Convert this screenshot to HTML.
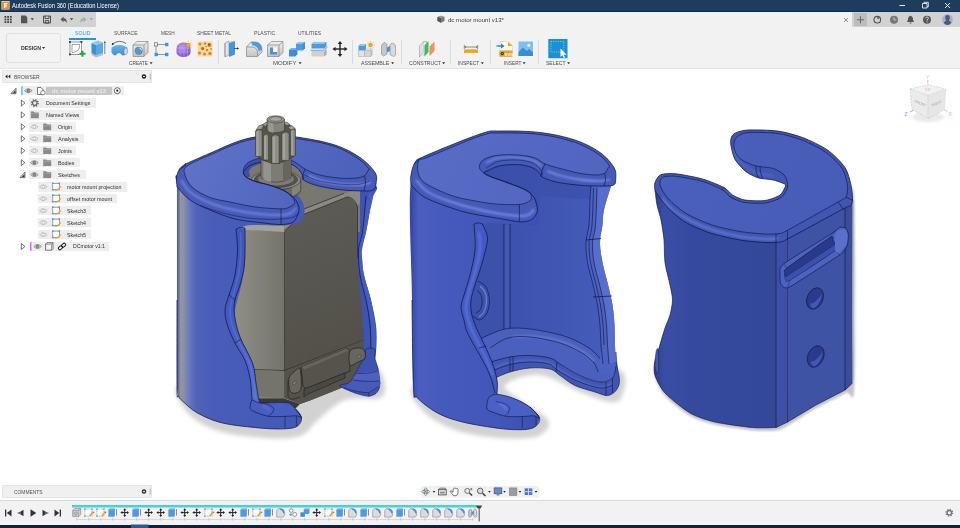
<!DOCTYPE html>
<html><head><meta charset="utf-8"><title>Autodesk Fusion 360 (Education License)</title>
<style>
html,body{margin:0;padding:0;}
body{width:960px;height:528px;overflow:hidden;position:relative;background:#fff;font-family:"Liberation Sans",sans-serif;color:#444;}
.a{position:absolute;}
.t{position:absolute;white-space:nowrap;line-height:1;}
#title{left:0;top:0;width:960px;height:11px;background:#1e3c5c;border-bottom:1px solid #152c47;}
#qat{left:0;top:12px;width:960px;height:16px;background:#f2f2f2;}
#qatl{left:0;top:12px;width:96px;height:15px;background:#d2d2d2;}
#qatr{left:852px;top:12px;width:108px;height:15px;background:#d2d2d2;}
#plus{left:854px;top:13px;width:13px;height:13px;background:#bdbdbd;}
#ribbon{left:0;top:28px;width:960px;height:40px;background:#f2f2f2;border-bottom:1px solid #e2e2e2;}
#design{left:6px;top:33px;width:53px;height:28px;border:1px solid #e0e0e0;border-radius:3px;background:#f3f3f3;}
.tab{font-size:5.6px;top:30.5px;color:#555;}
.grp{font-size:5.4px;top:60.5px;color:#555;}
.sep{position:absolute;top:40px;width:1px;height:24px;background:#dcdcdc;}
#bhead{left:2px;top:70px;width:150px;height:13px;background:#f0f0f0;border:1px solid #e4e4e4;box-sizing:border-box;}
.row{position:absolute;height:10px;background:#eeeeee;}
.rt{position:absolute;font-size:5.4px;color:#333;white-space:nowrap;line-height:1;}
#chead{left:2px;top:485px;width:150px;height:13px;background:#f0f0f0;border:1px solid #e4e4e4;box-sizing:border-box;}
#tl{left:0;top:500px;width:960px;height:24px;background:#f2f2f2;border-top:1px solid #d9d9d9;}
#task{left:0;top:524.5px;width:960px;height:3.5px;background:#0f2139;}
</style></head><body>
<div class="a" id="title"></div>
<div class="a" id="qat"></div><div class="a" id="qatl"></div><div class="a" id="qatr"></div><div class="a" id="plus"></div>
<div class="a" id="ribbon"></div>
<div class="a" id="design"></div>
<div class="a" style="left:69px;top:38px;width:27px;height:2px;background:#1a9be0;"></div>
<div class="sep" style="left:218px;"></div><div class="sep" style="left:352px;"></div><div class="sep" style="left:401px;"></div><div class="sep" style="left:450px;"></div><div class="sep" style="left:490px;"></div><div class="sep" style="left:538px;"></div>
<svg class="a" style="left:0;top:0" width="960" height="70" viewBox="0 0 960 70">
<defs>
<linearGradient id="ib" x1="0" x2="0" y1="0" y2="1"><stop offset="0" stop-color="#6ab4ea"/><stop offset="1" stop-color="#3d8fd6"/></linearGradient>
<linearGradient id="ig" x1="0" x2="0" y1="0" y2="1"><stop offset="0" stop-color="#f0f0f0"/><stop offset="1" stop-color="#c4c4c4"/></linearGradient>
<radialGradient id="ip" cx="0.4" cy="0.35" r="0.7"><stop offset="0" stop-color="#b79af0"/><stop offset="1" stop-color="#7a4fd0"/></radialGradient>
</defs>
<!-- title icon -->
<rect x="1.500" y="1" width="8" height="8.500" fill="#fff"/><rect x="2" y="1.500" width="7" height="7.500" fill="#f08a24"/><path d="M4 3H7.500V4.300H5.300V5.200H7V6.400H5.300V8H4Z" fill="#fff"/>
<!-- window controls -->
<path d="M899.500 5.500H905" stroke="#fff" stroke-width="0.9"/>
<path d="M922.500 3.500H927V8H922.500Z M924 3.500V2.300H928.300V6.800H927" fill="none" stroke="#fff" stroke-width="0.8"/>
<path d="M945 3L950 8M950 3L945 8" stroke="#fff" stroke-width="0.9"/>
<!-- quick access -->
<g fill="#444">
<rect x="4.500" y="16" width="1.800" height="1.800"/><rect x="7.200" y="16" width="1.800" height="1.800"/><rect x="9.900" y="16" width="1.800" height="1.800"/>
<rect x="4.500" y="18.600" width="1.800" height="1.800"/><rect x="7.200" y="18.600" width="1.800" height="1.800"/><rect x="9.900" y="18.600" width="1.800" height="1.800"/>
<rect x="4.500" y="21.200" width="1.800" height="1.800"/><rect x="7.200" y="21.200" width="1.800" height="1.800"/><rect x="9.900" y="21.200" width="1.800" height="1.800"/>
<path d="M21 15.500H25.500L27.300 17.300V23.300H21Z" fill="#555"/>
<path d="M30.500 18.300H34L32.250 20.300Z"/>
<path d="M43.500 16H50.500V23H43.500Z M45 16V18.500H49V16 M45.300 20.500H48.700V23H45.300Z" fill="none" stroke="#444" stroke-width="0.9"/>
<path d="M60.500 19.500L63.500 16.500V18.300Q67.500 18.300 66.500 23Q65.500 20.300 63.500 20.500V22.300Z" fill="#555"/>
<path d="M69.800 18.300H73.300L71.550 20.300Z"/>
<path d="M86.500 19.500L83.500 16.500V18.300Q79.500 18.300 80.500 23Q81.500 20.300 83.500 20.500V22.300Z" fill="#aaa"/>
<path d="M89.500 18.300H93L91.250 20.300Z" fill="#999"/>
</g>
<!-- doc tab icon -->
<path d="M437.500 17L441 15.800L444.500 17V21L441 22.700L437.500 21Z" fill="#777"/><path d="M437.500 17L441 18.300L444.500 17L441 15.800Z" fill="#999"/><path d="M441 18.300V22.700L437.500 21V17Z" fill="#555"/>
<!-- tab close x -->
<path d="M844 18L848 22M848 18L844 22" stroke="#666" stroke-width="0.7"/>
<!-- plus -->
<path d="M857 19.800H864M860.500 16.300V23.300" stroke="#666" stroke-width="1"/>
<!-- right icons -->
<circle cx="877.300" cy="19.700" r="3.300" fill="none" stroke="#555" stroke-width="1.100"/><path d="M877 17L880 17.500L878 19.500Z" fill="#555"/>
<circle cx="894" cy="19.700" r="4" fill="#777"/><path d="M894 17.300V19.900H896.300" stroke="#d2d2d2" stroke-width="0.9" fill="none"/>
<path d="M910.500 15.700Q913 16.200 913 19.500L914 22H907L908 19.500Q908 16.200 910.500 15.700ZM909.600 22.500H911.400V23.500H909.600Z" fill="#555"/>
<circle cx="927" cy="19.700" r="4" fill="#555"/><path d="M925.600 18.500Q925.800 17 927.100 17Q928.500 17.100 928.400 18.400Q928.300 19.300 927.100 19.800V20.800" stroke="#d8d8d8" stroke-width="0.9" fill="none"/><rect x="926.600" y="21.500" width="1" height="1" fill="#d8d8d8"/>
<circle cx="947.500" cy="19.500" r="5.600" fill="#9fb4d2"/><circle cx="947.500" cy="19.500" r="5.600" fill="none" stroke="#c4d0e2" stroke-width="0.6"/>
<path d="M947.500 15Q950 15 949.800 18Q949.600 20 948.800 20.600L951.500 22.500Q950 25 947.500 25.100Q945 25 943.500 22.500L946.200 20.600Q945.400 20 945.200 18Q945 15 947.500 15Z" fill="#4a5a78"/>
<!-- DESIGN arrow -->
<path d="M42 47H45.200L43.600 49Z" fill="#333"/>
<!-- group arrows -->
<g fill="#333">
<path d="M149.6 62.300H152.6L151.1 64.200Z"/><path d="M298.6 62.300H301.6L300.1 64.200Z"/><path d="M391.1 62.300H394.1L392.6 64.200Z"/>
<path d="M442.1 62.300H445.1L443.6 64.200Z"/><path d="M480.8 62.300H483.8L482.3 64.200Z"/><path d="M522.6 62.300H525.6L524.1 64.200Z"/><path d="M567.1 62.300H570.1L568.6 64.200Z"/>
</g>
<!-- 1 create sketch -->
<g>
<rect x="70" y="42" width="11.500" height="12.500" fill="#fff" stroke="#555" stroke-width="0.600"/>
<path d="M72 44.500H79.500V47Q79 51 73.500 52.500H72Z" fill="none" stroke="#666" stroke-width="0.600"/>
<g fill="#333"><rect x="69" y="41" width="1.800" height="1.800"/><rect x="80.500" y="41" width="1.800" height="1.800"/><rect x="69" y="53.500" width="1.800" height="1.800"/></g>
<path d="M79.500 53.800H85.500M82.500 50.800V56.800" stroke="#1fa83c" stroke-width="1.900"/>
</g>
<!-- 2 extrude -->
<g>
<path d="M91.500 53L96 55.500L103 53V55L96 57.500L91.500 55Z" fill="#bdbdbd"/>
<path d="M91.500 43L96 45V55.500L91.500 53Z" fill="#3f8fd8"/><path d="M96 45L103 42.500V53L96 55.500Z" fill="#5aa7e6"/><path d="M91.500 43L98 40.500L103 42.500L96 45Z" fill="#8cc6f2"/>
<path d="M104.800 42V54" stroke="#333" stroke-width="0.600"/><path d="M103.800 42.800L104.800 41L105.800 42.800Z" fill="#333"/>
</g>
<!-- 3 revolve -->
<g>
<path d="M111.500 47.500Q119 42 127.500 47.500V52.500Q125 56 122.500 55.500Q119 50.500 115.500 55.500Q113 55.500 111.500 52.500Z" fill="url(#ib)"/>
<ellipse cx="125.800" cy="51.500" rx="1.700" ry="3.300" fill="#d8d8d8" stroke="#888" stroke-width="0.400"/>
<path d="M112.500 44Q119.500 39 126 43.500" fill="none" stroke="#333" stroke-width="0.700"/><path d="M111.800 45.500L112 42.800L114.300 44Z" fill="#333"/>
</g>
<!-- 4 hole -->
<g>
<path d="M133 45L137 41.500H148V52.500L144 56.500H133Z" fill="url(#ig)" stroke="#777" stroke-width="0.600"/>
<path d="M133 45H144V56.500M144 45L148 41.500" fill="none" stroke="#777" stroke-width="0.600"/>
<circle cx="138.700" cy="50.800" r="3.700" fill="#4a9be0" stroke="#666" stroke-width="0.500"/><path d="M138.500 47.500A3.500 3.500 0 0 1 142 51Q140 48.500 138.500 47.500Z" fill="#e8f2fc"/>
</g>
<!-- 5 pattern -->
<g>
<path d="M156 44.500H166M156 44.500V54.500M156 54.500H166" stroke="#555" stroke-width="0.600" fill="none"/>
<rect x="154.500" y="42.800" width="3.200" height="3.200" fill="#fff" stroke="#555" stroke-width="0.600"/>
<rect x="165" y="42.800" width="3.400" height="3.400" fill="#3f95de"/><rect x="154.500" y="52.800" width="3.400" height="3.400" fill="#3f95de"/><rect x="165" y="52.800" width="3.400" height="3.400" fill="#3f95de"/>
</g>
<!-- 6 form -->
<g>
<path d="M176.500 49Q176.500 43 183.500 42.500Q190.500 43 190.500 49V53Q189 57 183.500 57Q178 57 176.500 53Z" fill="url(#ip)"/>
<path d="M180 43.500V56.500M184 42.800V57M187.500 43.500V56M176.500 48H190.500M176.500 52H190.500" stroke="#c9b4f6" stroke-width="0.400" fill="none"/>
<circle cx="188.500" cy="45" r="2.300" fill="#f7a21b"/><path d="M188.500 41V42M188.500 48V49M184.500 45H185.500M191.500 45H192.500M185.700 42.200L186.400 42.900M190.600 47.100L191.300 47.800M191.300 42.200L190.600 42.900M185.700 47.800L186.400 47.100" stroke="#f7a21b" stroke-width="0.700"/>
</g>
<!-- 7 texture -->
<g>
<rect x="197.500" y="41.500" width="15" height="15" fill="#f3d9a6"/>
<g fill="#d98a1e"><circle cx="200" cy="44" r="1.500"/><circle cx="205" cy="43.500" r="1.200"/><circle cx="209.500" cy="45" r="2"/><circle cx="202.500" cy="48.500" r="1.800"/><circle cx="207" cy="50" r="1.300"/><circle cx="199.500" cy="53" r="1.600"/><circle cx="204.500" cy="54" r="1.500"/><circle cx="210" cy="53.500" r="1.700"/><circle cx="211" cy="49" r="0.900"/></g>
<g fill="#7a4a12"><circle cx="209" cy="44.500" r="1"/><circle cx="203" cy="49" r="0.800"/><circle cx="206" cy="46.500" r="0.600"/></g>
</g>
<!-- 8 press pull -->
<g>
<path d="M225 43L229 41V55L225 57Z" fill="#e4e4e4" stroke="#777" stroke-width="0.500"/><path d="M225 43Q224.500 50 225 57" fill="none" stroke="#777" stroke-width="0.500"/>
<path d="M229 43L235 41V54.500L229 57Z" fill="#3f95de"/><path d="M229 43L231 41.300H235" fill="#8cc6f2"/>
<path d="M234 48.500H238" stroke="#222" stroke-width="0.700"/><path d="M237 47.300L239 48.500L237 49.700Z" fill="#222"/>
</g>
<!-- 9 fillet -->
<g>
<path d="M246.500 47L251 42H256Q262 43 262 50V52L257.500 56.500H246.500Z" fill="url(#ig)" stroke="#777" stroke-width="0.600"/>
<path d="M251 42H256Q262 43 262 50L258.500 51Q258 46 252.500 45.500Z" fill="#4a9be0"/>
<path d="M246.500 47H252Q257.500 47.500 257.500 53V56.500" fill="none" stroke="#777" stroke-width="0.600"/>
</g>
<!-- 10 shell -->
<g>
<path d="M267.500 45L271.500 41.500H283V52.500L279 56.500H267.500Z" fill="url(#ig)" stroke="#777" stroke-width="0.600"/>
<path d="M267.500 45H279V56.500M279 45L283 41.500" fill="none" stroke="#777" stroke-width="0.600"/>
<path d="M270 47.500H273V52H277V54.500H270Z" fill="#3f95de"/><path d="M273 47.500H277V52H273Z" fill="#fafafa"/>
</g>
<!-- 11 combine -->
<g>
<path d="M289 50L291.500 48H297.500V54.500L295 56.500H289Z" fill="#3f8fd8"/><path d="M289 50H295V56.500" fill="none" stroke="#2f7cc4" stroke-width="0.400"/><path d="M289 50L291.500 48H297.500L295 50Z" fill="#6ab4ea"/>
<path d="M296 44L298.500 42H305V48.500L302.500 50.500H296Z" fill="#4a9be0"/><path d="M296 44L298.500 42H305L302.500 44Z" fill="#8cc6f2"/><path d="M302.500 44V50.500L305 48.500V42Z" fill="#3f8fd8"/>
</g>
<!-- 12 split -->
<g>
<path d="M311.500 44L314 42H326.500V46.500L324 48.500H311.500Z" fill="#4a9be0"/><path d="M311.500 44L314 42H326.500L324 44Z" fill="#8cc6f2"/>
<path d="M311.500 51H324L326.500 49V54.500L324 56.500H311.500Z" fill="#d0d0d0"/><path d="M324 51V56.500L326.500 54.500V49Z" fill="#b0b0b0"/>
<path d="M310.500 50.300L323 50.300L327.500 47" fill="none" stroke="#3f95de" stroke-width="0.800"/>
</g>
<!-- 13 move -->
<g fill="#222"><path d="M339.300 43.500H340.700V54.500H339.300Z"/><path d="M334.500 48.300H345.500V49.700H334.500Z"/>
<path d="M340 41L342.300 44H337.700Z"/><path d="M340 57L342.300 54H337.700Z"/><path d="M332.500 49L335.500 46.700V51.300Z"/><path d="M347.500 49L344.500 46.700V51.300Z"/></g>
<!-- 14 new component -->
<g>
<path d="M358.500 46L360.500 44H366V50.500H358.500Z" fill="#4a9be0"/><path d="M358.500 46L360.500 44H366L364.500 46Z" fill="#8cc6f2"/>
<path d="M358.500 50.500H364.500V56.500H358.500Z" fill="#e2e2e2" stroke="#999" stroke-width="0.400"/><path d="M364.500 50.500H371V56.500H364.500Z" fill="#d4d4d4" stroke="#999" stroke-width="0.400"/><path d="M364.500 50.500L366 49H372.500L371 50.500Z" fill="#f0f0f0" stroke="#999" stroke-width="0.400"/><path d="M371 50.500L372.500 49V55L371 56.500Z" fill="#bbb"/>
<circle cx="370.500" cy="45" r="2.300" fill="#f7a21b"/><path d="M370.500 41V42M370.500 48V49M366.500 45H367.500M373.500 45H374.500M367.700 42.200L368.400 42.900M372.600 47.100L373.300 47.800M373.300 42.200L372.600 42.900M367.700 47.800L368.400 47.100" stroke="#f7a21b" stroke-width="0.700"/>
</g>
<!-- 15 joint -->
<g>
<path d="M381.500 46Q382 43 385 42.500L387 44.500V54L383.500 56L381.500 54.500Z" fill="#c8c8c8" stroke="#777" stroke-width="0.500"/>
<path d="M395.500 46Q395 43.500 392 43L390 45V54.500L393.500 56.500L395.500 55Z" fill="#d8d8d8" stroke="#777" stroke-width="0.500"/>
<path d="M387 47.500L390 46V51L387 52.500Z" fill="#3f95de"/>
</g>
<!-- 16 construct -->
<g>
<path d="M419.500 46L423.500 41.500V52.500L419.500 57Z" fill="#e0e0e0" stroke="#888" stroke-width="0.500"/><path d="M423.500 41.500H426.500V52L423.500 55.500" fill="#ececec" stroke="#888" stroke-width="0.500"/>
<path d="M424.500 45.500L428.500 41V52L424.500 56.500Z" fill="#41b76a"/>
<path d="M429.500 46.500L434.500 41.500V51L429.500 56Z" fill="#ee9257"/>
</g>
<!-- 17 inspect -->
<g>
<rect x="464" y="49.500" width="14" height="3.500" fill="#f5a81c"/>
<path d="M464.300 45V49M477.700 45V49M465 47H477" stroke="#444" stroke-width="0.600" fill="none"/><path d="M464.500 47L466 46.200V47.800ZM477.500 47L476 46.200V47.800Z" fill="#444"/>
<path d="M466 49.500V50.800M468 49.500V50.800M470 49.500V50.800M472 49.500V50.800M474 49.500V50.800M476 49.500V50.800" stroke="#b8780c" stroke-width="0.400"/>
</g>
<!-- 18 insert svg -->
<g>
<path d="M500 41.500H508L512.500 46V56.500H500Z" fill="#fbfbfb" stroke="#bbb" stroke-width="0.400"/><path d="M508 41.500L512.500 46H508Z" fill="#f5a81c"/>
<rect x="499.500" y="50.500" width="13" height="6.200" fill="#e8a020"/><circle cx="502.300" cy="53.600" r="1.700" fill="#333"/><circle cx="502.300" cy="53.600" r="0.700" fill="#e8a020"/>
<text x="504.600" y="55.500" font-family="Liberation Sans,sans-serif" font-size="4.200" font-weight="bold" fill="#fff">SVG</text>
<path d="M496.500 46H502" stroke="#1f7fd6" stroke-width="1.300"/><path d="M501 43.500L504.500 46L501 48.500Z" fill="#1f7fd6"/>
</g>
<!-- 19 insert image -->
<g>
<rect x="518.500" y="41.500" width="14.500" height="14.500" fill="#7cc0f2"/><path d="M518.500 52L523 47.500L526.500 51L529 49L533 52.500V56H518.500Z" fill="#3d8bd0"/><circle cx="528.800" cy="45.300" r="1.500" fill="#fdf3b0"/>
</g>
<!-- 20 select -->
<g>
<rect x="548.300" y="39" width="19.200" height="19.200" fill="#1b8fd8"/>
<rect x="550.800" y="41.500" width="13" height="10.500" fill="none" stroke="#9be86a" stroke-width="0.700" stroke-dasharray="1.300 1"/>
<path d="M560.500 48.500V57L562.500 55.200L563.800 58L565 57.500L563.800 54.800H566.500Z" fill="#fff"/>
</g>
</svg>

<div class="a" id="bhead"></div>
<div class="a" id="chead"></div>
<div class="row" style="left:20.5px;top:85.8px;width:103.5px;height:9.6px;"></div>
<div class="a" style="left:46px;top:86.500px;width:66px;height:8.200px;background:#c6c6c6;"></div>
<div class="t" style="left:51.5px;top:88.5px;font-size:5.7px;color:#ececec;font-weight:bold;transform:scaleX(0.991);transform-origin:0 0;">dc motor mount v13</div>
<div class="row" style="left:29.0px;top:98.2px;width:66.5px;height:9.600px;"></div>
<div class="t" style="left:45.7px;top:100.9px;font-size:5.5px;color:#2e2e2e;transform:scaleX(0.953);transform-origin:0 0;">Document Settings</div>
<div class="row" style="left:29.0px;top:110.1px;width:54.5px;height:9.600px;"></div>
<div class="t" style="left:45.7px;top:112.8px;font-size:5.5px;color:#2e2e2e;transform:scaleX(0.984);transform-origin:0 0;">Named Views</div>
<div class="row" style="left:29.0px;top:122.0px;width:47.0px;height:9.600px;"></div>
<div class="t" style="left:58.0px;top:124.7px;font-size:5.5px;color:#2e2e2e;transform:scaleX(0.954);transform-origin:0 0;">Origin</div>
<div class="row" style="left:29.0px;top:133.9px;width:55.0px;height:9.600px;"></div>
<div class="t" style="left:58.0px;top:136.6px;font-size:5.5px;color:#2e2e2e;transform:scaleX(1.001);transform-origin:0 0;">Analysis</div>
<div class="row" style="left:29.0px;top:145.9px;width:47.0px;height:9.600px;"></div>
<div class="t" style="left:58.0px;top:148.6px;font-size:5.5px;color:#2e2e2e;transform:scaleX(0.974);transform-origin:0 0;">Joints</div>
<div class="row" style="left:29.0px;top:157.9px;width:51.0px;height:9.600px;"></div>
<div class="t" style="left:58.0px;top:160.6px;font-size:5.5px;color:#2e2e2e;transform:scaleX(0.981);transform-origin:0 0;">Bodies</div>
<div class="row" style="left:29.0px;top:169.8px;width:57.0px;height:9.600px;"></div>
<div class="t" style="left:58.0px;top:172.5px;font-size:5.5px;color:#2e2e2e;transform:scaleX(0.972);transform-origin:0 0;">Sketches</div>
<div class="row" style="left:38px;top:182.0px;width:88.6px;height:9.600px;"></div>
<div class="t" style="left:67.0px;top:184.7px;font-size:5.5px;color:#2e2e2e;transform:scaleX(0.969);transform-origin:0 0;">motor mount projection</div>
<div class="row" style="left:38px;top:193.9px;width:79.0px;height:9.600px;"></div>
<div class="t" style="left:67.0px;top:196.6px;font-size:5.5px;color:#2e2e2e;transform:scaleX(0.984);transform-origin:0 0;">offset motor mount</div>
<div class="row" style="left:38px;top:205.9px;width:53.0px;height:9.600px;"></div>
<div class="t" style="left:67.0px;top:208.6px;font-size:5.5px;color:#2e2e2e;transform:scaleX(0.956);transform-origin:0 0;">Sketch3</div>
<div class="row" style="left:38px;top:217.8px;width:53.0px;height:9.600px;"></div>
<div class="t" style="left:67.0px;top:220.5px;font-size:5.5px;color:#2e2e2e;transform:scaleX(0.956);transform-origin:0 0;">Sketch4</div>
<div class="row" style="left:38px;top:229.8px;width:53.0px;height:9.600px;"></div>
<div class="t" style="left:67.0px;top:232.5px;font-size:5.5px;color:#2e2e2e;transform:scaleX(0.956);transform-origin:0 0;">Sketch5</div>
<div class="row" style="left:29.500px;top:241.7px;width:79px;height:9.600px;"></div>
<div class="t" style="left:73.0px;top:244.4px;font-size:5.5px;color:#2e2e2e;transform:scaleX(0.943);transform-origin:0 0;">DCmotor v1:1</div>
<svg class="a" style="left:0;top:0" width="160" height="528" viewBox="0 0 160 528"><path d="M7.500 74.500L5.300 76.500L7.500 78.500ZM10.300 74.500L8.100 76.500L10.300 78.500Z" fill="#222"/>
<circle cx="144" cy="76.500" r="2.200" fill="#222"/><rect x="143" y="76" width="2" height="1" fill="#eee"/>
<path d="M150.300 73.500V79.500" stroke="#999" stroke-width="0.700"/>
<circle cx="144" cy="491.500" r="2.200" fill="#222"/><path d="M142.800 491.500h2.400M144 490.300v2.400" stroke="#eee" stroke-width="0.700"/>
<path d="M150.300 488.500V494.500" stroke="#999" stroke-width="0.700"/>
<path d="M16.0 93.7h-5l5 -5.500Z" fill="#fff" stroke="#333" stroke-width="0.700" stroke-linejoin="round"/><path d="M15.5 93.2h-2.800l2.800 -3.200Z" fill="#333"/>
<rect x="21.300" y="86.300" width="1.300" height="8.800" fill="#3cc8d8"/>
<g transform="translate(28.3 90.7)" opacity="1"><path d="M-3.800 0Q0 -3.800 3.800 0Q0 3.800 -3.800 0Z" fill="#f6f6f6" stroke="#6a6a6a" stroke-width="0.700"/><circle r="1.600" fill="#8a8a8a" stroke="#6a6a6a" stroke-width="0.600"/></g>
<path d="M37.500 87.500h3.500l2 2v5h-5.500Z" fill="#fff" stroke="#444" stroke-width="0.700"/><path d="M40.800 91.500l2.200 -1l2 1v2.500l-2 1l-2.200 -1Z" fill="#fff" stroke="#444" stroke-width="0.600"/>
<circle cx="117.300" cy="90.700" r="3" fill="#fff" stroke="#333" stroke-width="0.700"/><circle cx="117.300" cy="90.700" r="1.100" fill="#222"/>
<path d="M21.3 100.0v6l3.600 -3Z" fill="#fff" stroke="#333" stroke-width="0.700" stroke-linejoin="round"/>
<g transform="translate(34.800 103.0)"><circle r="2.300" fill="none" stroke="#666" stroke-width="1.300"/><circle r="3.300" fill="none" stroke="#666" stroke-width="1.400" stroke-dasharray="1.300 1.290"/></g>
<path d="M21.3 111.9v6l3.600 -3Z" fill="#fff" stroke="#333" stroke-width="0.700" stroke-linejoin="round"/>
<path d="M30.8 111.6h3l0.800 0.900h4.200v5.800h-8Z" fill="#8a8a8a"/><path d="M30.8 113.7h8" stroke="#b5b5b5" stroke-width="0.500"/>
<path d="M21.3 123.8v6l3.600 -3Z" fill="#fff" stroke="#333" stroke-width="0.700" stroke-linejoin="round"/>
<g transform="translate(34.3 126.8)" opacity="0.45"><path d="M-3.800 0Q0 -3.800 3.800 0Q0 3.800 -3.800 0Z" fill="#f6f6f6" stroke="#6a6a6a" stroke-width="0.700"/><circle r="1.600" fill="none" stroke="#6a6a6a" stroke-width="0.600"/></g>
<path d="M43.2 123.5h3l0.800 0.900h4.200v5.800h-8Z" fill="#8a8a8a"/><path d="M43.2 125.6h8" stroke="#b5b5b5" stroke-width="0.500"/>
<path d="M21.3 135.7v6l3.600 -3Z" fill="#fff" stroke="#333" stroke-width="0.700" stroke-linejoin="round"/>
<g transform="translate(34.3 138.7)" opacity="0.45"><path d="M-3.800 0Q0 -3.800 3.800 0Q0 3.800 -3.800 0Z" fill="#f6f6f6" stroke="#6a6a6a" stroke-width="0.700"/><circle r="1.600" fill="none" stroke="#6a6a6a" stroke-width="0.600"/></g>
<path d="M43.2 135.4h3l0.800 0.900h4.200v5.800h-8Z" fill="#8a8a8a"/><path d="M43.2 137.5h8" stroke="#b5b5b5" stroke-width="0.500"/>
<path d="M21.3 147.7v6l3.600 -3Z" fill="#fff" stroke="#333" stroke-width="0.700" stroke-linejoin="round"/>
<g transform="translate(34.3 150.7)" opacity="0.45"><path d="M-3.800 0Q0 -3.800 3.800 0Q0 3.800 -3.800 0Z" fill="#f6f6f6" stroke="#6a6a6a" stroke-width="0.700"/><circle r="1.600" fill="none" stroke="#6a6a6a" stroke-width="0.600"/></g>
<path d="M43.2 147.4h3l0.800 0.900h4.200v5.800h-8Z" fill="#8a8a8a"/><path d="M43.2 149.5h8" stroke="#b5b5b5" stroke-width="0.500"/>
<path d="M21.3 159.7v6l3.600 -3Z" fill="#fff" stroke="#333" stroke-width="0.700" stroke-linejoin="round"/>
<g transform="translate(34.3 162.7)" opacity="1"><path d="M-3.800 0Q0 -3.800 3.800 0Q0 3.800 -3.800 0Z" fill="#f6f6f6" stroke="#6a6a6a" stroke-width="0.700"/><circle r="1.600" fill="#8a8a8a" stroke="#6a6a6a" stroke-width="0.600"/></g>
<path d="M43.2 159.4h3l0.800 0.900h4.200v5.800h-8Z" fill="#8a8a8a"/><path d="M43.2 161.5h8" stroke="#b5b5b5" stroke-width="0.500"/>
<path d="M25.0 177.6h-5l5 -5.500Z" fill="#fff" stroke="#333" stroke-width="0.700" stroke-linejoin="round"/><path d="M24.5 177.1h-2.800l2.800 -3.200Z" fill="#333"/>
<g transform="translate(34.3 174.6)" opacity="1"><path d="M-3.800 0Q0 -3.800 3.800 0Q0 3.800 -3.800 0Z" fill="#f6f6f6" stroke="#6a6a6a" stroke-width="0.700"/><circle r="1.600" fill="#8a8a8a" stroke="#6a6a6a" stroke-width="0.600"/></g>
<path d="M43.2 171.3h3l0.800 0.900h4.200v5.800h-8Z" fill="#8a8a8a"/><path d="M43.2 173.4h8" stroke="#b5b5b5" stroke-width="0.500"/>
<g transform="translate(43.3 186.8)" opacity="0.45"><path d="M-3.800 0Q0 -3.800 3.800 0Q0 3.800 -3.800 0Z" fill="#f6f6f6" stroke="#6a6a6a" stroke-width="0.700"/><circle r="1.600" fill="none" stroke="#6a6a6a" stroke-width="0.600"/></g>
<rect x="52.8" y="183.3" width="6.500" height="6.500" fill="#fff" stroke="#666" stroke-width="0.600"/><g fill="#3f95de"><rect x="52.0" y="182.5" width="1.500" height="1.500"/><rect x="58.5" y="182.5" width="1.500" height="1.500"/><rect x="52.0" y="189.1" width="1.500" height="1.500"/></g><path d="M56.8 189.6l3.500 -3.500l1 1l-3.500 3.500Z" fill="#f5a81c"/><path d="M56.8 190.6l-1.400 0.300l0.400 -1.300Z" fill="#d33"/>
<g transform="translate(43.3 198.7)" opacity="0.45"><path d="M-3.800 0Q0 -3.800 3.800 0Q0 3.800 -3.800 0Z" fill="#f6f6f6" stroke="#6a6a6a" stroke-width="0.700"/><circle r="1.600" fill="none" stroke="#6a6a6a" stroke-width="0.600"/></g>
<rect x="52.8" y="195.2" width="6.500" height="6.500" fill="#fff" stroke="#666" stroke-width="0.600"/><g fill="#3f95de"><rect x="52.0" y="194.4" width="1.500" height="1.500"/><rect x="58.5" y="194.4" width="1.500" height="1.500"/><rect x="52.0" y="201.0" width="1.500" height="1.500"/></g><path d="M56.8 201.5l3.500 -3.500l1 1l-3.500 3.500Z" fill="#f5a81c"/><path d="M56.8 202.5l-1.400 0.300l0.400 -1.300Z" fill="#d33"/>
<g transform="translate(43.3 210.7)" opacity="0.45"><path d="M-3.800 0Q0 -3.800 3.800 0Q0 3.800 -3.800 0Z" fill="#f6f6f6" stroke="#6a6a6a" stroke-width="0.700"/><circle r="1.600" fill="none" stroke="#6a6a6a" stroke-width="0.600"/></g>
<rect x="52.8" y="207.2" width="6.500" height="6.500" fill="#fff" stroke="#666" stroke-width="0.600"/><g fill="#3f95de"><rect x="52.0" y="206.4" width="1.500" height="1.500"/><rect x="58.5" y="206.4" width="1.500" height="1.500"/><rect x="52.0" y="213.0" width="1.500" height="1.500"/></g><path d="M56.8 213.5l3.500 -3.500l1 1l-3.500 3.500Z" fill="#f5a81c"/><path d="M56.8 214.5l-1.400 0.300l0.400 -1.300Z" fill="#d33"/>
<g transform="translate(43.3 222.6)" opacity="0.45"><path d="M-3.800 0Q0 -3.800 3.800 0Q0 3.800 -3.800 0Z" fill="#f6f6f6" stroke="#6a6a6a" stroke-width="0.700"/><circle r="1.600" fill="none" stroke="#6a6a6a" stroke-width="0.600"/></g>
<rect x="52.8" y="219.1" width="6.500" height="6.500" fill="#fff" stroke="#666" stroke-width="0.600"/><g fill="#3f95de"><rect x="52.0" y="218.3" width="1.500" height="1.500"/><rect x="58.5" y="218.3" width="1.500" height="1.500"/><rect x="52.0" y="224.9" width="1.500" height="1.500"/></g><path d="M56.8 225.4l3.500 -3.500l1 1l-3.500 3.500Z" fill="#f5a81c"/><path d="M56.8 226.4l-1.400 0.300l0.400 -1.300Z" fill="#d33"/>
<g transform="translate(43.3 234.6)" opacity="0.45"><path d="M-3.800 0Q0 -3.800 3.800 0Q0 3.800 -3.800 0Z" fill="#f6f6f6" stroke="#6a6a6a" stroke-width="0.700"/><circle r="1.600" fill="none" stroke="#6a6a6a" stroke-width="0.600"/></g>
<rect x="52.8" y="231.1" width="6.500" height="6.500" fill="#fff" stroke="#666" stroke-width="0.600"/><g fill="#3f95de"><rect x="52.0" y="230.3" width="1.500" height="1.500"/><rect x="58.5" y="230.3" width="1.500" height="1.500"/><rect x="52.0" y="236.9" width="1.500" height="1.500"/></g><path d="M56.8 237.4l3.500 -3.500l1 1l-3.500 3.500Z" fill="#f5a81c"/><path d="M56.8 238.4l-1.400 0.300l0.400 -1.300Z" fill="#d33"/>
<path d="M21.3 243.5v6l3.600 -3Z" fill="#fff" stroke="#333" stroke-width="0.700" stroke-linejoin="round"/>
<rect x="30" y="242.1" width="1.500" height="8.800" fill="#e070d8"/>
<g transform="translate(37.5 246.5)" opacity="1"><path d="M-3.800 0Q0 -3.800 3.800 0Q0 3.800 -3.800 0Z" fill="#f6f6f6" stroke="#6a6a6a" stroke-width="0.700"/><circle r="1.600" fill="#8a8a8a" stroke="#6a6a6a" stroke-width="0.600"/></g>
<path d="M45.500 244.2l1.500 -1.500h6v6l-1.500 1.500h-6Z" fill="#f4f4f4" stroke="#444" stroke-width="0.700" stroke-linejoin="round"/><path d="M45.500 244.2h6v6M51.500 244.2l1.500 -1.500" fill="none" stroke="#444" stroke-width="0.500"/>
<g transform="translate(62 246.5) rotate(-40)" fill="none" stroke="#222" stroke-width="1"><rect x="-4.300" y="-1.500" width="4.600" height="3" rx="1.500"/><rect x="-0.300" y="-1.500" width="4.600" height="3" rx="1.500"/></g></svg>
<div class="a" id="tl"></div>
<div class="a" id="task"></div>
<svg class="a" style="left:0;top:0" width="960" height="528" viewBox="0 0 960 528">
<g fill="#333">
<rect x="5" y="509.500" width="1.300" height="7"/><path d="M11.500 509.500V516.500L6.800 513Z"/>
<path d="M23.500 509.800V516.200L18.500 513Z"/><path d="M21 511.500L17 513L21 514.500Z" fill="#666"/>
<path d="M30.500 509.300V516.700L36.300 513Z"/>
<path d="M42.500 509.800V516.200L47.500 513Z"/><path d="M45 511.500L49 513L45 514.500Z" fill="#666"/>
<path d="M54.500 509.500V516.500L59.200 513Z"/><rect x="59.700" y="509.500" width="1.300" height="7"/>
</g>
<rect x="72" y="505" width="405.500" height="2.500" fill="#45d2dc"/>
<path d="M77 519.500H473" stroke="#cfcfcf" stroke-width="0.700"/>
<path d="M76.7 518v2.800M88.7 518v2.800M100.7 518v2.800M112.7 518v2.800M124.7 518v2.800M136.7 518v2.800M148.7 518v2.800M160.7 518v2.800M172.7 518v2.800M184.7 518v2.800M196.7 518v2.800M208.7 518v2.800M220.7 518v2.800M232.7 518v2.800M244.7 518v2.800M256.7 518v2.800M268.7 518v2.800M280.7 518v2.800M292.7 518v2.800M304.7 518v2.800M316.7 518v2.800M328.7 518v2.800M340.7 518v2.800M352.7 518v2.800M364.7 518v2.800M376.7 518v2.800M388.7 518v2.800M400.7 518v2.800M412.7 518v2.800M424.7 518v2.800M436.7 518v2.800M448.7 518v2.800M460.7 518v2.800M472.7 518v2.800" stroke="#bdbdbd" stroke-width="0.700"/>
<path d="M72.7 510.6l2 -2h6v6l-2 2h-6Z" fill="#d8d8d8" stroke="#777" stroke-width="0.600"/><path d="M72.7 510.6h6v6M78.7 510.6l2 -2" fill="none" stroke="#777" stroke-width="0.500"/><circle cx="75.7" cy="513.6" r="1.800" fill="#bbb" stroke="#777" stroke-width="0.400"/>
<rect x="84.9" y="509.1" width="7" height="7" fill="#fdfdfd" stroke="#777" stroke-width="0.500" stroke-dasharray="1.200 0.600"/><g fill="#3f95de"><rect x="84.2" y="508.4" width="1.300" height="1.300"/><rect x="91.3" y="508.4" width="1.300" height="1.300"/><rect x="84.2" y="515.5" width="1.300" height="1.300"/></g><path d="M89.0 515.4l3.300 -3.300l1.200 1.200l-3.300 3.300Z" fill="#f5a81c"/><path d="M92.3 512.1l1.200 1.200l0.800 -0.800l-1.200 -1.200Z" fill="#e0403a"/>
<rect x="96.9" y="509.1" width="7" height="7" fill="#fdfdfd" stroke="#777" stroke-width="0.500" stroke-dasharray="1.200 0.600"/><g fill="#3f95de"><rect x="96.2" y="508.4" width="1.300" height="1.300"/><rect x="103.3" y="508.4" width="1.300" height="1.300"/><rect x="96.2" y="515.5" width="1.300" height="1.300"/></g><path d="M101.0 515.4l3.300 -3.300l1.200 1.200l-3.300 3.300Z" fill="#f5a81c"/><path d="M104.3 512.1l1.200 1.200l0.800 -0.800l-1.200 -1.200Z" fill="#e0403a"/>
<path d="M108.4 515.6h6.500v1.500h-6.500Z" fill="#c4c4c4"/><path d="M108.4 509.6l1.500 -1.200h5v7l-1.500 1.200h-5Z" fill="#4a9be0"/><path d="M108.4 509.6l1.500 -1.200h5l-1.500 1.200Z" fill="#8cc6f2"/><path d="M116.5 509.1v6.500" stroke="#444" stroke-width="0.600"/>
<g fill="#222" transform="translate(124.7 512.6)"><rect x="-0.500" y="-3" width="1" height="6"/><rect x="-3" y="-0.500" width="6" height="1"/><path d="M0 -4.300L1.500 -2.300H-1.500ZM0 4.300L1.500 2.300H-1.500ZM-4.300 0L-2.300 -1.500V1.500ZM4.300 0L2.300 -1.500V1.500Z"/></g>
<path d="M132.4 515.6h6.500v1.500h-6.500Z" fill="#c4c4c4"/><path d="M132.4 509.6l1.500 -1.200h5v7l-1.500 1.200h-5Z" fill="#4a9be0"/><path d="M132.4 509.6l1.500 -1.200h5l-1.500 1.200Z" fill="#8cc6f2"/><path d="M140.5 509.1v6.500" stroke="#444" stroke-width="0.600"/>
<g fill="#222" transform="translate(148.7 512.6)"><rect x="-0.500" y="-3" width="1" height="6"/><rect x="-3" y="-0.500" width="6" height="1"/><path d="M0 -4.300L1.500 -2.300H-1.500ZM0 4.300L1.500 2.300H-1.500ZM-4.300 0L-2.300 -1.500V1.500ZM4.300 0L2.300 -1.500V1.500Z"/></g>
<g fill="#222" transform="translate(160.7 512.6)"><rect x="-0.500" y="-3" width="1" height="6"/><rect x="-3" y="-0.500" width="6" height="1"/><path d="M0 -4.300L1.500 -2.300H-1.500ZM0 4.300L1.500 2.300H-1.500ZM-4.300 0L-2.300 -1.500V1.500ZM4.300 0L2.300 -1.500V1.500Z"/></g>
<path d="M168.4 515.6h6.500v1.500h-6.500Z" fill="#c4c4c4"/><path d="M168.4 509.6l1.500 -1.200h5v7l-1.500 1.200h-5Z" fill="#4a9be0"/><path d="M168.4 509.6l1.500 -1.200h5l-1.500 1.200Z" fill="#8cc6f2"/><path d="M176.5 509.1v6.500" stroke="#444" stroke-width="0.600"/>
<g fill="#222" transform="translate(184.7 512.6)"><rect x="-0.500" y="-3" width="1" height="6"/><rect x="-3" y="-0.500" width="6" height="1"/><path d="M0 -4.300L1.500 -2.300H-1.500ZM0 4.300L1.500 2.300H-1.500ZM-4.300 0L-2.300 -1.500V1.500ZM4.300 0L2.300 -1.500V1.500Z"/></g>
<g fill="#222" transform="translate(196.7 512.6)"><rect x="-0.500" y="-3" width="1" height="6"/><rect x="-3" y="-0.500" width="6" height="1"/><path d="M0 -4.300L1.500 -2.300H-1.500ZM0 4.300L1.500 2.300H-1.500ZM-4.300 0L-2.300 -1.500V1.500ZM4.300 0L2.300 -1.500V1.500Z"/></g>
<rect x="204.9" y="509.1" width="7" height="7" fill="#fdfdfd" stroke="#777" stroke-width="0.500" stroke-dasharray="1.200 0.600"/><g fill="#3f95de"><rect x="204.2" y="508.4" width="1.300" height="1.300"/><rect x="211.3" y="508.4" width="1.300" height="1.300"/><rect x="204.2" y="515.5" width="1.300" height="1.300"/></g><path d="M209.0 515.4l3.300 -3.300l1.200 1.200l-3.300 3.300Z" fill="#f5a81c"/><path d="M212.3 512.1l1.200 1.200l0.800 -0.800l-1.200 -1.200Z" fill="#e0403a"/>
<g fill="#222" transform="translate(220.7 512.6)"><rect x="-0.500" y="-3" width="1" height="6"/><rect x="-3" y="-0.500" width="6" height="1"/><path d="M0 -4.300L1.500 -2.300H-1.500ZM0 4.300L1.500 2.300H-1.500ZM-4.300 0L-2.300 -1.500V1.500ZM4.300 0L2.300 -1.500V1.500Z"/></g>
<g fill="#222" transform="translate(232.7 512.6)"><rect x="-0.500" y="-3" width="1" height="6"/><rect x="-3" y="-0.500" width="6" height="1"/><path d="M0 -4.300L1.500 -2.300H-1.500ZM0 4.300L1.500 2.300H-1.500ZM-4.300 0L-2.300 -1.500V1.500ZM4.300 0L2.300 -1.500V1.500Z"/></g>
<path d="M240.4 515.6h6.500v1.500h-6.500Z" fill="#c4c4c4"/><path d="M240.4 509.6l1.500 -1.200h5v7l-1.500 1.200h-5Z" fill="#4a9be0"/><path d="M240.4 509.6l1.500 -1.200h5l-1.500 1.200Z" fill="#8cc6f2"/><path d="M248.5 509.1v6.500" stroke="#444" stroke-width="0.600"/>
<rect x="252.9" y="509.1" width="7" height="7" fill="#fdfdfd" stroke="#777" stroke-width="0.500" stroke-dasharray="1.200 0.600"/><g fill="#3f95de"><rect x="252.2" y="508.4" width="1.300" height="1.300"/><rect x="259.3" y="508.4" width="1.300" height="1.300"/><rect x="252.2" y="515.5" width="1.300" height="1.300"/></g><path d="M257.0 515.4l3.300 -3.300l1.200 1.200l-3.300 3.300Z" fill="#f5a81c"/><path d="M260.3 512.1l1.200 1.200l0.800 -0.800l-1.200 -1.200Z" fill="#e0403a"/>
<path d="M264.4 515.6h6.500v1.500h-6.500Z" fill="#c4c4c4"/><path d="M264.4 509.6l1.500 -1.200h5v7l-1.500 1.200h-5Z" fill="#4a9be0"/><path d="M264.4 509.6l1.500 -1.200h5l-1.500 1.200Z" fill="#8cc6f2"/><path d="M272.5 509.1v6.500" stroke="#444" stroke-width="0.600"/>
<path d="M276.7 510.6l1.500 -2h2.500q4 0.500 4 4.500v2l-1.500 2h-6.500Z" fill="#dcdcdc" stroke="#777" stroke-width="0.500"/><path d="M280.7 508.6q4 0.500 4 4.500l-1.500 0.500q-0.300 -3 -3.500 -3.800Z" fill="#3f95de"/>
<circle cx="291.2" cy="510.6" r="1.800" fill="#fff" stroke="#555" stroke-width="0.600"/><circle cx="294.7" cy="514.4" r="2" fill="#fff" stroke="#555" stroke-width="0.600"/><rect x="289.7" y="513.6" width="2" height="2" fill="#3f95de"/>
<path d="M300.4 512.3h4.500v4.500h-4.500Z" fill="#3f8fd8"/><path d="M303.7 509.6l1.300 -1.200h4.500v4.500l-1.300 1.200h-4.500Z" fill="#4a9be0"/><path d="M303.7 509.6l1.300 -1.200h4.500l-1.300 1.200Z" fill="#8cc6f2"/>
<g fill="#222" transform="translate(316.7 512.6)"><rect x="-0.500" y="-3" width="1" height="6"/><rect x="-3" y="-0.500" width="6" height="1"/><path d="M0 -4.300L1.500 -2.300H-1.500ZM0 4.300L1.500 2.300H-1.500ZM-4.300 0L-2.300 -1.500V1.500ZM4.300 0L2.300 -1.500V1.500Z"/></g>
<rect x="324.9" y="509.1" width="7" height="7" fill="#fdfdfd" stroke="#777" stroke-width="0.500" stroke-dasharray="1.200 0.600"/><g fill="#3f95de"><rect x="324.2" y="508.4" width="1.300" height="1.300"/><rect x="331.3" y="508.4" width="1.300" height="1.300"/><rect x="324.2" y="515.5" width="1.300" height="1.300"/></g><path d="M329.0 515.4l3.300 -3.300l1.200 1.200l-3.300 3.300Z" fill="#f5a81c"/><path d="M332.3 512.1l1.200 1.200l0.800 -0.800l-1.200 -1.200Z" fill="#e0403a"/>
<path d="M336.4 515.6h6.500v1.500h-6.500Z" fill="#c4c4c4"/><path d="M336.4 509.6l1.500 -1.200h5v7l-1.500 1.200h-5Z" fill="#4a9be0"/><path d="M336.4 509.6l1.500 -1.200h5l-1.500 1.200Z" fill="#8cc6f2"/><path d="M344.5 509.1v6.500" stroke="#444" stroke-width="0.600"/>
<path d="M348.7 510.6l1.500 -2h2.500q4 0.500 4 4.500v2l-1.500 2h-6.500Z" fill="#dcdcdc" stroke="#777" stroke-width="0.500"/><path d="M352.7 508.6q4 0.500 4 4.500l-1.500 0.500q-0.300 -3 -3.500 -3.800Z" fill="#3f95de"/>
<path d="M360.4 515.6h6.500v1.500h-6.500Z" fill="#c4c4c4"/><path d="M360.4 509.6l1.500 -1.200h5v7l-1.500 1.200h-5Z" fill="#4a9be0"/><path d="M360.4 509.6l1.500 -1.200h5l-1.500 1.200Z" fill="#8cc6f2"/><path d="M368.5 509.1v6.500" stroke="#444" stroke-width="0.600"/>
<path d="M372.7 510.6l1.500 -2h2.500q4 0.500 4 4.500v2l-1.500 2h-6.500Z" fill="#dcdcdc" stroke="#777" stroke-width="0.500"/><path d="M376.7 508.6q4 0.500 4 4.500l-1.500 0.500q-0.300 -3 -3.500 -3.800Z" fill="#3f95de"/>
<path d="M384.7 510.6l1.500 -2h2.500q4 0.500 4 4.500v2l-1.500 2h-6.500Z" fill="#dcdcdc" stroke="#777" stroke-width="0.500"/><path d="M388.7 508.6q4 0.500 4 4.500l-1.500 0.500q-0.300 -3 -3.500 -3.800Z" fill="#3f95de"/>
<path d="M396.4 515.6h6.500v1.500h-6.500Z" fill="#c4c4c4"/><path d="M396.4 509.6l1.500 -1.200h5v7l-1.500 1.200h-5Z" fill="#4a9be0"/><path d="M396.4 509.6l1.500 -1.200h5l-1.500 1.200Z" fill="#8cc6f2"/><path d="M404.5 509.1v6.500" stroke="#444" stroke-width="0.600"/>
<path d="M408.7 510.6l1.500 -2h2.500q4 0.500 4 4.500v2l-1.500 2h-6.500Z" fill="#dcdcdc" stroke="#777" stroke-width="0.500"/><path d="M412.7 508.6q4 0.500 4 4.500l-1.500 0.500q-0.300 -3 -3.500 -3.800Z" fill="#3f95de"/>
<path d="M420.7 510.6l1.500 -2h2.500q4 0.500 4 4.500v2l-1.500 2h-6.500Z" fill="#dcdcdc" stroke="#777" stroke-width="0.500"/><path d="M424.7 508.6q4 0.500 4 4.500l-1.500 0.500q-0.300 -3 -3.500 -3.800Z" fill="#3f95de"/>
<path d="M432.7 510.6l1.500 -2h2.500q4 0.500 4 4.500v2l-1.500 2h-6.500Z" fill="#dcdcdc" stroke="#777" stroke-width="0.500"/><path d="M436.7 508.6q4 0.500 4 4.500l-1.500 0.500q-0.300 -3 -3.500 -3.800Z" fill="#3f95de"/>
<path d="M444.7 510.6l1.500 -2h2.500q4 0.500 4 4.500v2l-1.500 2h-6.500Z" fill="#dcdcdc" stroke="#777" stroke-width="0.500"/><path d="M448.7 508.6q4 0.500 4 4.500l-1.500 0.500q-0.300 -3 -3.500 -3.800Z" fill="#3f95de"/>
<path d="M456.7 510.6l1.500 -2h2.500q4 0.500 4 4.500v2l-1.500 2h-6.500Z" fill="#dcdcdc" stroke="#777" stroke-width="0.500"/><path d="M460.7 508.6q4 0.500 4 4.500l-1.500 0.500q-0.300 -3 -3.500 -3.800Z" fill="#3f95de"/>
<path d="M468.7 511.1q0.200 -1.500 2 -2l1 1v6l-2 1.200l-1 -0.800Z" fill="#c8c8c8" stroke="#666" stroke-width="0.500"/><path d="M476.7 511.1q-0.200 -1.500 -2 -2l-1 1v6l2 1.200l1 -0.800Z" fill="#d8d8d8" stroke="#666" stroke-width="0.500"/><path d="M471.7 512.1l2 -1v3l-2 1Z" fill="#3f95de"/>
<path d="M476 505.500h6.300l-1.800 3h-2.700Z" fill="#444"/><rect x="478.600" y="508" width="1.200" height="13.500" fill="#666"/>
<g transform="translate(949.300 512.700)"><circle r="2.200" fill="none" stroke="#777" stroke-width="1.400"/><circle r="3.300" fill="none" stroke="#777" stroke-width="1.300" stroke-dasharray="1.300 1.290"/></g>
<rect x="131" y="524.500" width="17.500" height="3.500" fill="#2b5b8e"/>
<rect x="421" y="486" width="118" height="11.500" fill="#f0f0f0"/>
<g transform="translate(425.700 491.7)"><ellipse rx="3.800" ry="1.600" fill="none" stroke="#666" stroke-width="0.700"/><ellipse rx="1.600" ry="3.800" fill="none" stroke="#666" stroke-width="0.700"/><circle r="1" fill="#3f95de"/></g>
<path d="M432.7 491.1h2.600l-1.300 1.600Z" fill="#222"/>
<path d="M488.2 491.1h2.600l-1.300 1.600Z" fill="#222"/>
<path d="M503.2 491.1h2.600l-1.300 1.600Z" fill="#222"/>
<path d="M518.7 491.1h2.600l-1.300 1.600Z" fill="#222"/>
<path d="M534.7 491.1h2.600l-1.300 1.600Z" fill="#222"/>
<g transform="translate(442.400 491.7)"><rect x="-3.800" y="-2" width="7.600" height="5.200" fill="#e8e8e8" stroke="#444" stroke-width="0.800"/><path d="M-3.800 -2l1 -1.500h5.600l1 1.500" fill="none" stroke="#444" stroke-width="0.700"/><rect x="-2.300" y="0" width="4.600" height="1.800" fill="#888"/></g>
<g transform="translate(455.500 491.7)"><path d="M-2.500 0.500v-2.500q0 -0.800 0.800 -0.800v-0.500q0.800 -0.800 1.500 0q0.800 -0.600 1.500 0.200q0.900 -0.300 1.200 0.600v3.500q0 2.500 -2 3h-2q-1 -0.300 -2.500 -2.500l-1.300 -1.800q0.500 -1 1.500 0Z" fill="#f8f8f8" stroke="#444" stroke-width="0.700"/></g>
<g transform="translate(468.300 491.7)"><circle cx="-1" cy="-0.800" r="2.500" fill="#e4ecf4" stroke="#555" stroke-width="0.800"/><path d="M1 1.200l2.800 2.600" stroke="#333" stroke-width="1.300"/><path d="M3 -3.800v2.400M1.800 -2.600h2.400" stroke="#444" stroke-width="0.600"/></g>
<g transform="translate(481 491.7)"><circle cx="-0.800" cy="-0.800" r="2.800" fill="#d8dde4" stroke="#555" stroke-width="0.900"/><path d="M1.500 1.500l3 2.800" stroke="#333" stroke-width="1.400"/></g>
<g transform="translate(498 491.7)"><rect x="-3.800" y="-3.800" width="7.600" height="5.800" fill="#5b8fd8" stroke="#555" stroke-width="0.800"/><rect x="-1.500" y="2" width="3" height="1.800" fill="#888"/></g>
<rect x="509.300" y="487.9" width="7.600" height="7.600" fill="#9a9ca2" stroke="#777" stroke-width="0.500"/>
<g transform="translate(528.500 491.7)"><rect x="-3.800" y="-3.300" width="7.600" height="6.600" fill="#4a78c8"/><path d="M0 -3.300v6.600M-3.800 0h7.600" stroke="#e8eefc" stroke-width="0.800"/></g>
<g opacity="0.9">
<ellipse cx="928" cy="117" rx="16" ry="5" fill="#e8e8e8" filter="url(#b1)"/>
<path d="M910 89L928 84.700L945.600 89L928 95.400Z" fill="#f1f1f1"/><path d="M910 89L928 95.400V118.500L912 109.700Z" fill="#e9e9e9"/><path d="M928 95.400L945.600 89L944.400 109.700L928 118.500Z" fill="#e4e4e4"/>
<path d="M910 89L928 84.700L945.600 89L928 95.400ZM910 89L912 109.700L928 118.500L944.400 109.700L945.600 89M928 95.400V118.500" fill="none" stroke="#c0c0c0" stroke-width="0.600" stroke-dasharray="2 1"/>
<text x="914" y="102.500" font-family="Liberation Sans,sans-serif" font-size="3.500" fill="#999" transform="rotate(20 914.500 103)">FRONT</text>
<text x="932" y="106.500" font-family="Liberation Sans,sans-serif" font-size="3.500" fill="#999" transform="rotate(-22 932 106.500)">RIGHT</text>
<text x="924.500" y="90.500" font-family="Liberation Sans,sans-serif" font-size="3" fill="#b5b5b5">TOP</text>
<path d="M927.800 79.800V84.500" stroke="#8be88b" stroke-width="0.900"/><path d="M913 110.500l-3 1.500" stroke="#6a6af0" stroke-width="0.700"/><path d="M944.500 110l3 1.500" stroke="#f09090" stroke-width="0.700"/>
<text x="926" y="79.300" font-family="Liberation Sans,sans-serif" font-size="5" fill="#8be88b">Y</text>
<text x="904.500" y="116" font-family="Liberation Sans,sans-serif" font-size="5" fill="#7878f0">Z</text>
<text x="948.500" y="115.500" font-family="Liberation Sans,sans-serif" font-size="5" fill="#f08888">X</text>
</g>
</svg>
<div class="t" style="left:12.0px;top:3.0px;font-size:6.6px;color:#fff;transform:scaleX(0.876);transform-origin:0 0;">Autodesk Fusion 360 (Education License)</div>
<div class="t" style="left:447.5px;top:17.9px;font-size:5.9px;color:#3a3a3a;transform:scaleX(1.029);transform-origin:0 0;">dc motor mount v13*</div>
<div class="t" style="left:21.0px;top:45.6px;font-size:5.6px;color:#333;font-weight:bold;transform:scaleX(0.931);transform-origin:0 0;">DESIGN</div>
<div class="t" style="left:75.0px;top:30.9px;font-size:5.9px;color:#1a9be0;transform:scaleX(0.875);transform-origin:0 0;">SOLID</div>
<div class="t" style="left:114.0px;top:30.9px;font-size:5.9px;color:#505050;transform:scaleX(0.843);transform-origin:0 0;">SURFACE</div>
<div class="t" style="left:160.5px;top:30.9px;font-size:5.9px;color:#505050;transform:scaleX(0.804);transform-origin:0 0;">MESH</div>
<div class="t" style="left:197.0px;top:30.9px;font-size:5.9px;color:#505050;transform:scaleX(0.841);transform-origin:0 0;">SHEET METAL</div>
<div class="t" style="left:253.5px;top:30.9px;font-size:5.9px;color:#505050;transform:scaleX(0.866);transform-origin:0 0;">PLASTIC</div>
<div class="t" style="left:297.5px;top:30.9px;font-size:5.9px;color:#505050;transform:scaleX(0.835);transform-origin:0 0;">UTILITIES</div>
<div class="t" style="left:128.5px;top:61.2px;font-size:5.7px;color:#4a4a4a;transform:scaleX(0.837);transform-origin:0 0;">CREATE</div>
<div class="t" style="left:273.0px;top:61.2px;font-size:5.7px;color:#4a4a4a;transform:scaleX(1.060);transform-origin:0 0;">MODIFY</div>
<div class="t" style="left:361.0px;top:61.2px;font-size:5.7px;color:#4a4a4a;transform:scaleX(0.921);transform-origin:0 0;">ASSEMBLE</div>
<div class="t" style="left:408.5px;top:61.2px;font-size:5.7px;color:#4a4a4a;transform:scaleX(0.894);transform-origin:0 0;">CONSTRUCT</div>
<div class="t" style="left:458.0px;top:61.2px;font-size:5.7px;color:#4a4a4a;transform:scaleX(0.862);transform-origin:0 0;">INSPECT</div>
<div class="t" style="left:503.5px;top:61.2px;font-size:5.7px;color:#4a4a4a;transform:scaleX(0.841);transform-origin:0 0;">INSERT</div>
<div class="t" style="left:546.0px;top:61.2px;font-size:5.7px;color:#4a4a4a;transform:scaleX(0.879);transform-origin:0 0;">SELECT</div>
<div class="t" style="left:14.4px;top:74.6px;font-size:5.5px;color:#505050;transform:scaleX(0.901);transform-origin:0 0;">BROWSER</div>
<div class="t" style="left:14.4px;top:489.6px;font-size:5.5px;color:#505050;transform:scaleX(0.888);transform-origin:0 0;">COMMENTS</div>
<svg class="a" style="left:0;top:0" width="960" height="528" viewBox="0 0 960 528">
<defs>
<filter id="bl" x="-20%" y="-20%" width="140%" height="140%"><feGaussianBlur stdDeviation="2.2"/></filter>
<filter id="b1" x="-20%" y="-20%" width="140%" height="140%"><feGaussianBlur stdDeviation="0.8"/></filter>
<linearGradient id="w1" x1="177" x2="301" y1="0" y2="0" gradientUnits="userSpaceOnUse">
<stop offset="0" stop-color="#4558b4"/><stop offset="0.008" stop-color="#5864a8"/><stop offset="0.028" stop-color="#94959a"/><stop offset="0.052" stop-color="#8f91a2"/><stop offset="0.075" stop-color="#7a84be"/><stop offset="0.11" stop-color="#6272bc"/><stop offset="0.16" stop-color="#5062b8"/><stop offset="0.3" stop-color="#485cb8"/><stop offset="1" stop-color="#4458b8"/></linearGradient>
<linearGradient id="cf1" x1="0" x2="0" y1="228" y2="405" gradientUnits="userSpaceOnUse"><stop offset="0" stop-color="#3f54bc"/><stop offset="0.55" stop-color="#445ac2"/><stop offset="1" stop-color="#5870d4"/></linearGradient>
<linearGradient id="mL" x1="240" x2="284" y1="0" y2="0" gradientUnits="userSpaceOnUse"><stop offset="0" stop-color="#8c8c85"/><stop offset="1" stop-color="#74746d"/></linearGradient>
<linearGradient id="mR" x1="284" x2="356" y1="230" y2="400" gradientUnits="userSpaceOnUse"><stop offset="0" stop-color="#5b5a54"/><stop offset="1" stop-color="#504d46"/></linearGradient>
<linearGradient id="t1" x1="200" x2="340" y1="140" y2="215" gradientUnits="userSpaceOnUse"><stop offset="0" stop-color="#5f72c8"/><stop offset="1" stop-color="#4d60ba"/></linearGradient>
<linearGradient id="w2" x1="411" x2="540" y1="0" y2="0" gradientUnits="userSpaceOnUse">
<stop offset="0" stop-color="#3548a6"/><stop offset="0.06" stop-color="#4c5ec0"/><stop offset="0.25" stop-color="#455abc"/><stop offset="0.7" stop-color="#4156b8"/><stop offset="1" stop-color="#3b50b2"/></linearGradient>
<linearGradient id="in2" x1="490" x2="615" y1="0" y2="0" gradientUnits="userSpaceOnUse"><stop offset="0" stop-color="#3a4fac"/><stop offset="0.5" stop-color="#4056b2"/><stop offset="1" stop-color="#475dbc"/></linearGradient>
<linearGradient id="t2" x1="430" x2="600" y1="140" y2="215" gradientUnits="userSpaceOnUse"><stop offset="0" stop-color="#586cc6"/><stop offset="1" stop-color="#5064c0"/></linearGradient>
<linearGradient id="w3" x1="655" x2="777" y1="0" y2="0" gradientUnits="userSpaceOnUse">
<stop offset="0" stop-color="#2f3f8e"/><stop offset="0.08" stop-color="#3b4ea6"/><stop offset="0.3" stop-color="#354a9e"/><stop offset="1" stop-color="#34489a"/></linearGradient>
<linearGradient id="t3" x1="660" x2="850" y1="130" y2="230" gradientUnits="userSpaceOnUse"><stop offset="0" stop-color="#4a60bc"/><stop offset="1" stop-color="#465cb6"/></linearGradient>
</defs>
<g filter="url(#bl)" fill="#d2d2d2">
<path d="M178.0 385.0C172.2 388.3 178.8 402.5 185.0 410.0C191.2 417.5 201.7 425.3 215.0 430.0C228.3 434.7 250.8 437.0 265.0 438.0C279.2 439.0 291.2 439.0 300.0 436.0C308.8 433.0 310.5 426.0 318.0 420.0C325.5 414.0 334.7 403.7 345.0 400.0C355.3 396.3 373.5 401.3 380.0 398.0C386.5 394.7 385.7 385.0 384.0 380.0C382.3 375.0 384.0 368.0 370.0 368.0C356.0 368.0 325.0 376.3 300.0 380.0C275.0 383.7 240.3 389.2 220.0 390.0C199.7 390.8 183.8 381.7 178.0 385.0Z"/>
<path d="M414.0 385.0C406.0 391.3 415.2 402.5 422.0 410.0C428.8 417.5 442.0 425.3 455.0 430.0C468.0 434.7 486.2 437.0 500.0 438.0C513.8 439.0 530.0 439.0 538.0 436.0C546.0 433.0 551.0 426.0 548.0 420.0C545.0 414.0 527.2 405.8 520.0 400.0C512.8 394.2 501.7 389.2 505.0 385.0C508.3 380.8 527.5 373.8 540.0 375.0C552.5 376.2 568.3 387.5 580.0 392.0C591.7 396.5 603.0 401.3 610.0 402.0C617.0 402.7 620.3 401.3 622.0 396.0C623.7 390.7 630.3 375.7 620.0 370.0C609.7 364.3 585.0 361.7 560.0 362.0C535.0 362.3 494.3 368.2 470.0 372.0C445.7 375.8 422.0 378.7 414.0 385.0Z"/>
</g>
<path filter="url(#b1)" fill="#c4c4c4" d="M656.0 372.0C651.2 372.7 659.5 389.1 664.0 395.0C668.5 400.9 683.1 412.0 690.0 416.0C696.9 420.0 707.6 423.1 716.0 425.0C724.4 426.9 744.9 429.8 753.0 430.5C761.1 431.2 772.2 431.2 777.0 430.5C781.8 429.8 783.8 427.9 789.0 425.0C794.2 422.1 808.4 412.8 816.0 408.5C823.6 404.2 840.9 396.1 846.0 393.0C851.1 389.9 853.4 410.1 854.5 385.0C855.6 359.9 855.1 229.0 854.5 205.0C853.9 181.0 850.9 183.0 850.0 205.0C849.1 227.0 860.0 344.0 848.0 370.0C836.0 396.0 779.7 397.3 760.0 400.0C740.3 402.7 713.9 393.7 700.0 390.0C686.1 386.3 660.8 371.3 656.0 372.0Z"/>
<path fill="#3f53b2" d="M350.0 188.0C354.3 169.0 372.3 184.0 376.0 186.0C379.7 188.0 373.6 192.7 372.0 200.0C370.4 207.3 368.2 221.7 366.5 230.0C364.8 238.3 362.7 244.7 362.0 250.0C361.3 255.3 362.2 257.8 362.5 262.0C362.8 266.2 362.6 268.7 364.0 275.0C365.4 281.3 369.0 291.7 371.0 300.0C373.0 308.3 375.1 317.5 376.0 325.0C376.9 332.5 376.7 338.8 376.5 345.0C376.3 351.2 375.1 357.8 375.0 362.0C374.9 366.2 380.2 368.7 376.0 370.0C371.8 371.3 354.3 381.7 350.0 370.0C345.7 358.3 350.0 330.3 350.0 300.0C350.0 269.7 345.7 207.0 350.0 188.0Z"/>
<path fill="#465cc0" d="M368.0 196.0C369.8 190.0 372.8 192.8 373.0 196.0C373.2 199.2 370.2 209.0 369.0 215.0C367.8 221.0 367.2 226.2 366.0 232.0C364.8 237.8 361.8 242.8 361.5 250.0C361.2 257.2 362.4 266.7 364.0 275.0C365.6 283.3 369.2 291.7 371.0 300.0C372.8 308.3 374.2 316.3 375.0 325.0C375.8 333.7 375.7 345.8 375.5 352.0C375.3 358.2 374.8 362.0 374.0 362.0C373.2 362.0 371.5 358.2 371.0 352.0C370.5 345.8 371.8 333.7 371.0 325.0C370.2 316.3 367.8 308.3 366.0 300.0C364.2 291.7 361.2 283.3 360.0 275.0C358.8 266.7 358.2 257.2 358.5 250.0C358.8 242.8 360.4 241.0 362.0 232.0C363.6 223.0 366.2 202.0 368.0 196.0Z"/>
<path fill="none" stroke="#101644" stroke-width="0.75" d="M366.0 196.0C365.4 202.0 363.8 223.0 362.5 232.0C361.2 241.0 358.9 242.8 358.5 250.0C358.1 257.2 358.8 266.7 360.0 275.0C361.2 283.3 364.3 291.7 366.0 300.0C367.7 308.3 369.2 316.3 370.0 325.0C370.8 333.7 370.8 345.2 371.0 352.0C371.2 358.8 371.0 363.7 371.0 366.0"/>
<path fill="#787770" d="M242.0 160.0L360.0 160.0L360.0 232.0L284.0 232.0L242.0 228.0Z"/>
<path fill="url(#mL)" d="M224.0 226.0L284.5 231.0L284.5 399.0L224.0 399.0Z"/>
<path fill="#3a3934" d="M224 398.500H284.500L300 404L296 408H224Z"/>
<path fill="#a3a39c" d="M240.0 224.0L284.5 226.0L284.5 232.0L240.0 229.5Z"/>
<path fill="url(#mR)" d="M284.5 228.0L300.0 215.6L347.5 196.8L352.7 199.4L357.5 205.0L357.5 260.0L359.5 285.0L362.0 310.0L363.5 335.0L364.0 352.0L357.5 380.0L340.0 388.5L310.0 400.5L300.0 404.0L284.5 398.0Z"/>
<path fill="#8a8a82" d="M284.5 225.0L300.0 210.5L344.0 193.4L347.5 196.8L300.7 215.6L284.5 231.0Z"/>
<path fill="#8a8982" d="M344.0 193.4L360.0 189.0L360.0 203.0L357.5 206.0L356.0 204.0L352.7 199.4L347.5 196.8Z"/>
<path fill="none" stroke="#2e2d28" stroke-width="0.75" d="M284.5 232V398M252 369.5L284.5 370.5L364 340M284.5 225L300 210.500L344 193.400M284.500 231L300.700 215.600L347.500 196.800Q355 198 357.500 207V258"/>
<path fill="#74736c" d="M252.0 370.0L284.5 371.0L284.5 398.0L254.0 396.0Z"/>
<path fill="#55524b" d="M284.5 371.0L364.0 340.0L357.0 380.0L340.0 388.5L310.0 400.5L300.0 404.0L284.5 398.0Z"/>
<path fill="#55534c" stroke="#24231f" stroke-width="0.75" d="M301.0 367.5L347.0 348.5L350.0 351.0L350.0 371.0L306.0 389.0L303.0 386.0Z"/>
<path fill="#66645c" d="M301.5 367.0L346.5 348.5L349.0 350.5L304.5 369.5Z"/>
<path fill="#4a4842" stroke="#24231f" stroke-width="0.65" d="M304.0 389.0L345.0 373.0L345.0 378.0L308.0 394.0L304.0 397.0Z"/>
<path fill="#68665e" stroke="#24231f" stroke-width="0.75" d="M289.0 378.0C289.7 374.8 292.2 373.5 294.0 372.0C295.8 370.5 298.8 366.3 300.0 369.0C301.2 371.7 301.7 384.0 301.0 388.0C300.3 392.0 297.8 392.5 296.0 393.0C294.2 393.5 291.2 393.5 290.0 391.0C288.8 388.5 288.3 381.2 289.0 378.0Z"/>
<ellipse cx="294.5" cy="383" rx="2.2" ry="1.2" transform="rotate(-35 294.5 383)" fill="#8a8880" stroke="#24231f" stroke-width="0.4"/>
<path fill="none" stroke="#24231f" stroke-width="0.7" d="M288 380V396Q289 400 294 399L300 397"/>
<path fill="#3f53ae" stroke="#101644" stroke-width="0.500" d="M364.8 358.0C365.7 355.8 364.6 350.2 366.0 349.0C367.4 347.8 373.8 347.9 375.0 349.0C376.2 350.1 374.3 355.0 374.7 357.5C375.1 360.0 377.3 365.0 378.0 368.0C378.7 371.0 379.4 377.3 379.6 380.0C379.8 382.7 379.9 386.2 379.4 388.0C378.9 389.8 377.4 392.3 376.0 393.4C374.6 394.5 371.2 396.2 368.8 396.3C366.4 396.4 361.0 394.9 358.0 394.0C355.0 393.1 348.5 390.5 346.0 389.4C343.5 388.3 339.2 386.3 339.6 385.4C340.0 384.5 346.9 384.3 349.0 382.7C351.1 381.1 354.1 375.8 355.5 373.5C356.9 371.2 358.3 367.6 359.5 365.5C360.7 363.4 363.9 360.2 364.8 358.0Z"/>
<path fill="#4c61c2" d="M357.5 373.5C359.8 372.6 374.5 370.8 376.7 371.5C378.9 372.2 381.7 379.9 379.4 380.8C377.1 381.7 355.7 380.7 353.5 380.0C351.3 379.3 355.2 374.4 357.5 373.5Z"/>
<path fill="#465bb8" d="M353.5 380.5C356.8 379.8 376.9 380.6 379.4 381.2C381.9 381.8 379.8 385.6 378.7 386.7C377.6 387.8 372.1 392.5 368.8 392.7C365.5 392.9 347.5 389.7 346.0 388.5C344.5 387.3 350.2 381.2 353.5 380.5Z"/>
<path fill="none" stroke="#101644" stroke-width="0.500" d="M357.500 373.500Q368 374 376.700 371.500M353.500 380Q368 382.500 379.400 380.800M344 388Q358 392.500 368.800 392.700L378.700 386.700M368.800 392.700V396.300"/>
<path fill="#68665e" stroke="#24231f" stroke-width="0.75" d="M350.0 351.0C351.3 348.2 355.7 348.2 358.0 348.0C360.3 347.8 362.8 348.3 364.0 350.0C365.2 351.7 366.0 356.0 365.0 358.0C364.0 360.0 360.5 360.8 358.0 362.0C355.5 363.2 351.3 366.8 350.0 365.0C348.7 363.2 348.7 353.8 350.0 351.0Z"/>
<ellipse cx="359" cy="356.5" rx="2.4" ry="1.2" transform="rotate(-25 359 356.5)" fill="#8a8880" stroke="#24231f" stroke-width="0.4"/>
<path fill="url(#w1)" d="M177.0 182.0C177.0 183.2 177.0 147.7 177.0 182.0C177.0 216.3 177.0 353.7 177.0 388.0C177.0 422.3 176.8 386.7 177.0 388.0C177.2 389.3 177.6 393.8 178.5 396.0C179.4 398.2 179.3 398.2 182.5 401.0C185.7 403.8 190.8 409.3 197.5 413.0C204.2 416.7 212.1 420.5 222.5 423.0C232.9 425.5 249.6 427.0 260.0 428.0C270.4 429.0 278.8 429.1 285.0 428.8C291.2 428.5 294.8 427.8 297.5 426.0C300.2 424.2 301.2 420.2 301.5 418.0C301.8 415.8 300.4 414.8 299.2 413.0C297.9 411.2 296.0 409.0 294.0 407.3C292.0 405.6 291.3 403.5 287.3 402.7C283.3 401.9 274.6 402.8 270.0 402.7C265.4 402.6 261.8 405.3 259.5 402.0C257.2 398.7 257.2 389.5 256.0 383.0C254.8 376.5 254.2 368.8 252.5 363.0C250.8 357.2 247.6 352.3 245.5 348.0C243.4 343.7 241.8 341.3 240.0 337.0C238.2 332.7 235.8 326.5 235.0 322.0C234.2 317.5 234.5 314.0 235.0 310.0C235.5 306.0 236.8 302.7 238.0 298.0C239.2 293.3 240.8 288.0 242.0 282.0C243.2 276.0 244.5 269.0 245.0 262.0C245.5 255.0 245.0 246.0 245.0 240.0C245.0 234.0 235.8 229.0 245.0 226.0C254.2 223.0 292.5 228.0 300.0 222.0C307.5 216.0 306.7 197.8 290.0 190.0C273.3 182.2 218.8 177.5 200.0 175.0C181.2 172.5 180.8 173.8 177.0 175.0C173.2 176.2 177.0 180.8 177.0 182.0Z"/>
<path fill="url(#cf1)" d="M236.0 229.0C236.2 232.5 237.7 242.3 237.5 250.0C237.3 257.7 236.4 267.5 235.0 275.0C233.6 282.5 230.7 289.2 229.0 295.0C227.3 300.8 225.2 304.9 225.0 310.0C224.8 315.1 225.8 320.0 227.5 325.5C229.2 331.0 232.1 337.2 235.0 343.0C237.9 348.8 242.5 354.7 245.0 360.5C247.5 366.3 248.9 372.6 250.0 378.0C251.1 383.4 251.1 388.4 251.5 393.0C251.9 397.6 252.3 403.4 252.5 405.5L262.0 404.0C261.5 403.3 260.0 403.5 259.0 400.0C258.0 396.5 257.1 389.2 256.0 383.0C254.9 376.8 255.2 370.7 252.5 363.0C249.8 355.3 243.0 345.0 240.0 337.0C237.0 329.0 235.3 321.2 234.5 315.0C233.7 308.8 234.1 305.0 235.0 300.0C235.9 295.0 238.5 290.3 240.0 285.0C241.5 279.7 243.2 273.8 244.0 268.0C244.8 262.2 244.8 256.7 245.0 250.0C245.2 243.3 245.0 231.7 245.0 228.0Z"/>
<path fill="none" stroke="#7486dc" stroke-width="1.6" opacity="0.35" d="M240.5 232.0C240.6 235.0 241.2 243.3 241.0 250.0C240.8 256.7 240.2 265.0 239.0 272.0C237.8 279.0 235.5 285.7 234.0 292.0C232.5 298.3 230.3 304.5 230.0 310.0C229.7 315.5 230.5 319.7 232.0 325.0C233.5 330.3 236.2 335.8 239.0 342.0C241.8 348.2 246.6 355.7 249.0 362.0C251.4 368.3 252.4 374.0 253.5 380.0C254.6 386.0 255.2 395.0 255.5 398.0"/>
<path fill="none" stroke="#101644" stroke-width="0.75" d="M236.0 229.0C236.2 232.5 237.7 242.3 237.5 250.0C237.3 257.7 236.4 267.5 235.0 275.0C233.6 282.5 230.7 289.2 229.0 295.0C227.3 300.8 225.2 304.9 225.0 310.0C224.8 315.1 225.8 320.0 227.5 325.5C229.2 331.0 232.1 337.2 235.0 343.0C237.9 348.8 242.5 354.7 245.0 360.5C247.5 366.3 248.9 372.6 250.0 378.0C251.1 383.4 251.1 388.4 251.5 393.0C251.9 397.6 252.3 403.4 252.5 405.5"/>
<path fill="none" stroke="#101644" stroke-width="0.75" d="M245.0 228.0C245.0 231.7 245.2 243.3 245.0 250.0C244.8 256.7 244.8 262.2 244.0 268.0C243.2 273.8 241.5 279.7 240.0 285.0C238.5 290.3 235.9 295.0 235.0 300.0C234.1 305.0 233.7 308.8 234.5 315.0C235.3 321.2 237.0 329.0 240.0 337.0C243.0 345.0 249.8 355.3 252.5 363.0C255.2 370.7 254.9 376.8 256.0 383.0C257.1 389.2 258.0 396.5 259.0 400.0C260.0 403.5 261.5 403.3 262.0 404.0"/>
<path fill="none" stroke="#101644" stroke-width="0.65" d="M236 229Q240 226 245 228M229 295L235 300M235 343L241 339"/>
<path fill="#485dc2" stroke="#101644" stroke-width="0.65" d="M250.3 409.0C249.6 407.5 250.9 400.7 252.0 400.0C253.1 399.3 255.3 402.4 259.4 402.7C263.5 403.0 283.3 402.2 287.3 402.7C291.3 403.2 292.6 406.1 294.0 407.3C295.4 408.5 298.3 411.8 299.2 413.0C300.1 414.2 301.6 417.2 301.3 417.5C301.0 417.8 298.3 415.9 296.4 415.8C294.5 415.7 288.2 416.3 285.0 416.4C281.8 416.5 272.2 416.8 269.0 416.4C265.8 416.0 259.9 413.9 257.7 413.0C255.5 412.1 251.0 410.5 250.3 409.0Z"/>
<path fill="none" stroke="#101644" stroke-width="0.55" d="M259.400 402.700Q272 404 274 409.500Q273 414 268 416.300M285 416.400V427.700M296.400 415.800V426.600"/>
<path fill="none" stroke="#7f92e6" stroke-width="1.500" opacity="0.5" filter="url(#b1)" d="M262 406Q268 407 270 411"/>
<path fill="none" stroke="#101644" stroke-width="0.75" d="M177.0 300.0C177.0 314.7 176.8 372.0 177.0 388.0C177.2 404.0 177.6 393.8 178.5 396.0C179.4 398.2 179.3 398.2 182.5 401.0C185.7 403.8 190.8 409.3 197.5 413.0C204.2 416.7 212.1 420.5 222.5 423.0C232.9 425.5 249.6 427.0 260.0 428.0C270.4 429.0 278.8 429.1 285.0 428.8C291.2 428.5 294.8 427.8 297.5 426.0C300.2 424.2 301.9 420.8 301.5 418.0C301.1 415.2 296.1 410.5 295.0 409.0"/>
<path fill="#6a6962" stroke="#2a2924" stroke-width="0.500" d="M251.300 180A24.700 9.500 0 0 0 300.700 180V190A24.700 9.500 0 0 1 251.300 190Z"/>
<path fill="#858479" d="M292 186.500Q297 184.500 300.200 181V190.500Q297 194 292 196Z"/>
<ellipse cx="276" cy="180" rx="24.700" ry="9.500" fill="#8b8a83" stroke="#2a2924" stroke-width="0.500"/>
<ellipse cx="276" cy="179.500" rx="21.500" ry="8.200" fill="#55544d" stroke="#2a2924" stroke-width="0.500"/>
<ellipse cx="276" cy="179" rx="18.500" ry="7" fill="#7b7a73" stroke="#2a2924" stroke-width="0.400"/>
<path fill="#465ab8" d="M177.0 186.0C176.8 184.3 176.1 180.8 176.5 178.0C176.9 175.2 178.0 171.3 179.5 169.0C181.0 166.7 184.3 164.9 185.5 164.0C186.7 163.1 182.4 165.3 186.5 163.5C190.6 161.7 200.8 157.1 210.0 153.2C219.2 149.3 232.0 142.9 242.0 140.0C252.0 137.1 260.3 135.9 270.0 135.5C279.7 135.1 289.2 135.9 300.0 137.5C310.8 139.1 325.0 141.7 335.0 145.0C345.0 148.3 353.3 152.9 360.0 157.5C366.7 162.1 372.3 168.3 375.0 172.5C377.7 176.7 376.5 179.5 376.2 182.4C375.9 185.3 375.8 188.6 373.0 190.0C370.2 191.4 365.7 191.0 359.5 190.9C353.3 190.8 343.0 190.2 335.6 189.2C328.2 188.2 320.6 186.6 315.2 185.0C309.8 183.4 305.5 181.6 303.3 179.8C301.1 178.0 303.4 176.3 302.0 174.0C300.6 171.7 298.0 168.0 294.7 166.0C291.4 164.0 287.4 162.7 282.0 162.0C276.6 161.3 267.3 161.4 262.0 162.0C256.7 162.6 252.8 164.2 250.0 165.5C247.2 166.8 246.1 168.8 245.0 170.0C243.9 171.2 243.3 171.8 243.5 173.0C243.7 174.2 244.0 175.6 246.0 177.0C248.0 178.4 251.7 180.2 255.5 181.5C259.3 182.8 264.4 183.6 269.0 185.0C273.6 186.4 278.8 188.0 282.8 190.0C286.8 192.0 290.5 194.4 293.0 196.8C295.5 199.2 297.0 202.2 298.0 204.5C299.0 206.8 299.2 208.5 299.0 210.5C298.8 212.5 298.1 214.5 297.0 216.5C295.9 218.5 295.3 221.2 292.5 222.5C289.7 223.8 285.4 224.5 280.0 224.5C274.6 224.5 267.5 223.4 260.0 222.5C252.5 221.6 243.3 221.1 235.0 219.0C226.7 216.9 217.5 213.2 210.0 210.0C202.5 206.8 195.3 203.7 190.0 200.0C184.7 196.3 180.2 190.3 178.0 188.0C175.8 185.7 177.2 187.7 177.0 186.0Z"/>
<path fill="#3b4fa8" d="M243.3 172.0C243.2 170.5 244.1 167.4 245.0 166.0C245.9 164.6 247.7 162.6 250.0 161.5C252.3 160.4 258.7 158.5 262.0 158.0C265.3 157.5 273.3 156.8 275.0 157.5C276.7 158.2 276.7 162.2 275.0 163.0C273.3 163.8 264.9 163.0 262.0 163.5C259.1 164.0 254.7 165.5 253.0 166.5C251.3 167.5 249.4 169.7 249.0 171.0C248.6 172.3 250.4 175.7 250.0 176.5C249.6 177.3 246.9 177.6 246.0 177.0C245.1 176.4 243.4 173.5 243.3 172.0Z"/>
<path fill="url(#t1)" d="M187.0 166.0C191.2 162.7 200.8 159.0 210.0 155.0C219.2 151.0 232.0 144.8 242.0 141.8C252.0 138.8 260.3 137.5 270.0 137.0C279.7 136.5 289.2 137.4 300.0 139.0C310.8 140.6 325.3 143.2 335.0 146.5C344.7 149.8 352.3 154.8 358.0 158.5C363.7 162.2 367.3 167.0 369.0 169.0C370.7 171.0 368.7 169.3 368.0 170.4C367.3 171.5 366.6 174.3 364.6 175.6C362.6 176.9 360.3 177.7 356.0 178.1C351.7 178.5 345.2 178.7 339.0 178.1C332.8 177.5 324.3 176.2 318.6 174.7C312.9 173.2 309.0 171.1 305.0 169.0C301.0 166.9 298.5 163.8 294.7 162.0C290.9 160.2 287.4 158.7 282.0 158.0C276.6 157.3 267.3 157.4 262.0 158.0C256.7 158.6 252.8 160.2 250.0 161.5C247.2 162.8 246.1 164.2 245.0 166.0C243.9 167.8 243.1 170.2 243.3 172.0C243.5 173.8 244.0 175.4 246.0 177.0C248.0 178.6 251.7 180.2 255.5 181.5C259.3 182.8 264.4 183.6 269.0 185.0C273.6 186.4 279.1 188.2 282.8 190.0C286.5 191.8 289.0 193.9 291.0 196.0C293.0 198.1 294.9 201.0 294.7 202.8C294.5 204.6 291.9 206.0 289.6 207.0C287.3 208.0 286.7 208.8 281.0 208.8C275.3 208.8 264.0 208.1 255.5 207.0C247.0 205.9 237.6 203.6 230.0 202.0C222.4 200.4 216.2 199.9 210.0 197.5C203.8 195.1 196.7 191.2 192.5 187.5C188.3 183.8 185.9 178.6 185.0 175.0C184.1 171.4 182.8 169.3 187.0 166.0Z"/>
<path fill="none" stroke="#8494e4" stroke-width="2" opacity="0.75" filter="url(#b1)" d="M181.0 180.0C182.5 182.0 185.2 188.2 190.0 192.0C194.8 195.8 203.0 200.1 210.0 203.0C217.0 205.9 224.4 207.8 232.0 209.5C239.6 211.2 247.3 212.6 255.5 213.5C263.7 214.4 275.1 215.1 281.0 215.0C286.9 214.9 288.5 214.2 291.0 213.0C293.5 211.8 295.2 208.8 296.0 208.0"/>
<path fill="none" stroke="#8a9ae8" stroke-width="2.2" opacity="0.8" filter="url(#b1)" d="M308.0 175.5C310.0 176.3 314.7 179.1 320.0 180.5C325.3 181.9 333.3 183.3 340.0 184.0C346.7 184.7 354.8 185.1 360.0 184.8C365.2 184.5 369.2 182.5 371.0 182.0"/>
<path fill="none" stroke="#101644" stroke-width="0.5" d="M200.0 205.6C203.8 206.8 215.3 211.0 222.9 213.0C230.5 215.0 238.2 216.6 245.8 217.7C253.5 218.8 262.7 219.2 268.8 219.4C274.9 219.6 278.3 219.2 282.5 218.8C286.7 218.4 291.3 218.1 294.0 217.0C296.7 215.9 297.8 213.2 298.5 212.5"/>
<path fill="none" stroke="#101644" stroke-width="0.5" d="M304.5 175.0C306.8 175.9 312.2 179.0 318.0 180.5C323.8 182.0 332.3 183.3 339.0 184.0C345.7 184.7 352.8 185.0 358.0 184.5C363.2 184.0 368.0 181.6 370.0 181.0"/>
<path fill="none" stroke="#101644" stroke-width="0.75" d="M177.0 186.0C176.8 184.3 176.1 180.8 176.5 178.0C176.9 175.2 178.0 171.3 179.5 169.0C181.0 166.7 184.3 164.9 185.5 164.0C186.7 163.1 182.4 165.3 186.5 163.5C190.6 161.7 200.8 157.1 210.0 153.2C219.2 149.3 232.0 142.9 242.0 140.0C252.0 137.1 260.3 135.9 270.0 135.5C279.7 135.1 289.2 135.9 300.0 137.5C310.8 139.1 325.0 141.7 335.0 145.0C345.0 148.3 353.3 152.9 360.0 157.5C366.7 162.1 372.3 168.3 375.0 172.5C377.7 176.7 376.5 179.5 376.2 182.4C375.9 185.3 375.8 188.6 373.0 190.0C370.2 191.4 365.7 191.0 359.5 190.9C353.3 190.8 343.0 190.2 335.6 189.2C328.2 188.2 320.6 186.6 315.2 185.0C309.8 183.4 305.5 181.6 303.3 179.8C301.1 178.0 303.4 176.3 302.0 174.0C300.6 171.7 298.0 168.0 294.7 166.0C291.4 164.0 287.4 162.7 282.0 162.0C276.6 161.3 267.3 161.4 262.0 162.0C256.7 162.6 252.8 164.2 250.0 165.5C247.2 166.8 246.1 168.8 245.0 170.0C243.9 171.2 243.3 171.8 243.5 173.0C243.7 174.2 244.0 175.6 246.0 177.0C248.0 178.4 251.7 180.2 255.5 181.5C259.3 182.8 264.4 183.6 269.0 185.0C273.6 186.4 278.8 188.0 282.8 190.0C286.8 192.0 290.5 194.4 293.0 196.8C295.5 199.2 297.0 202.2 298.0 204.5C299.0 206.8 299.2 208.5 299.0 210.5C298.8 212.5 298.1 214.5 297.0 216.5C295.9 218.5 295.3 221.2 292.5 222.5C289.7 223.8 285.4 224.5 280.0 224.5C274.6 224.5 267.5 223.4 260.0 222.5C252.5 221.6 243.3 221.1 235.0 219.0C226.7 216.9 217.5 213.2 210.0 210.0C202.5 206.8 195.3 203.7 190.0 200.0C184.7 196.3 180.2 190.3 178.0 188.0C175.8 185.7 177.2 187.7 177.0 186.0Z"/>
<path fill="none" stroke="#101644" stroke-width="0.65" d="M187.0 166.0C191.2 162.7 200.8 159.0 210.0 155.0C219.2 151.0 232.0 144.8 242.0 141.8C252.0 138.8 260.3 137.5 270.0 137.0C279.7 136.5 289.2 137.4 300.0 139.0C310.8 140.6 325.3 143.2 335.0 146.5C344.7 149.8 352.3 154.8 358.0 158.5C363.7 162.2 367.3 167.0 369.0 169.0C370.7 171.0 368.7 169.3 368.0 170.4C367.3 171.5 366.6 174.3 364.6 175.6C362.6 176.9 360.3 177.7 356.0 178.1C351.7 178.5 345.2 178.7 339.0 178.1C332.8 177.5 324.3 176.2 318.6 174.7C312.9 173.2 309.0 171.1 305.0 169.0C301.0 166.9 298.5 163.8 294.7 162.0C290.9 160.2 287.4 158.7 282.0 158.0C276.6 157.3 267.3 157.4 262.0 158.0C256.7 158.6 252.8 160.2 250.0 161.5C247.2 162.8 246.1 164.2 245.0 166.0C243.9 167.8 243.1 170.2 243.3 172.0C243.5 173.8 244.0 175.4 246.0 177.0C248.0 178.6 251.7 180.2 255.5 181.5C259.3 182.8 264.4 183.6 269.0 185.0C273.6 186.4 279.1 188.2 282.8 190.0C286.5 191.8 289.0 193.9 291.0 196.0C293.0 198.1 294.9 201.0 294.7 202.8C294.5 204.6 291.9 206.0 289.6 207.0C287.3 208.0 286.7 208.8 281.0 208.8C275.3 208.8 264.0 208.1 255.5 207.0C247.0 205.9 237.6 203.6 230.0 202.0C222.4 200.4 216.2 199.9 210.0 197.5C203.8 195.1 196.7 191.2 192.5 187.5C188.3 183.8 185.9 178.6 185.0 175.0C184.1 171.4 182.8 169.3 187.0 166.0Z"/>
<path fill="none" stroke="#101644" stroke-width="0.65" d="M281 208.800V224.500M364.600 175.600Q367 183 364 190.700M186 165L179 170M305 169Q302 174 303.300 179.800"/>
<path fill="#7d7c74" stroke="#2a2924" stroke-width="0.500" d="M261 156V178Q276 186.500 291 178V156Z"/>
<path fill="#95948c" d="M263.500 156V179.500Q267 181.500 271 182V156Z"/>
<path fill="#66655e" d="M283 156V181.500Q288 180.500 290.700 178V156Z"/>
<path fill="#55544d" stroke="#2a2924" stroke-width="0.500" d="M255.700 131V155Q262 161 268 162L272 163.500H279L282 162Q290 160 295.300 155V129Q290 124 284 123H267Q260 124 255.700 131Z"/>
<path fill="#a09f97" stroke="#2a2924" stroke-width="0.400" d="M256.0 130.0L259.0 125.5L264.0 124.5L262.0 129.0Z"/>
<path fill="#a09f97" stroke="#2a2924" stroke-width="0.400" d="M262.5 125.0L266.0 122.0L268.0 123.0L266.0 126.5Z"/>
<path fill="#a09f97" stroke="#2a2924" stroke-width="0.400" d="M284.0 122.5L287.0 122.0L290.0 124.5L286.0 125.5Z"/>
<path fill="#a09f97" stroke="#2a2924" stroke-width="0.400" d="M288.0 127.0L292.0 125.5L295.3 128.5L291.0 130.0Z"/>
<path fill="#8f8e86" stroke="#2a2924" stroke-width="0.400" d="M255.7 131.0Q258.9 128.0 262.0 131.0V156.5H255.7Z"/>
<rect x="256.3" y="131.5" width="2.2" height="24.0" fill="#a4a39b"/>
<path fill="#8f8e86" stroke="#2a2924" stroke-width="0.400" d="M263.5 135.5Q266.0 132.5 268.5 135.5V160.0H263.5Z"/>
<rect x="264.1" y="136.0" width="1.8" height="23.0" fill="#a4a39b"/>
<path fill="#8f8e86" stroke="#2a2924" stroke-width="0.400" d="M272.0 136.2Q275.5 133.2 279.0 136.2V163.5H272.0Z"/>
<rect x="272.6" y="136.7" width="2.4" height="25.8" fill="#a4a39b"/>
<path fill="#8f8e86" stroke="#2a2924" stroke-width="0.400" d="M282.0 133.5Q285.5 130.5 289.0 133.5V160.5H282.0Z"/>
<rect x="282.6" y="134.0" width="2.4" height="25.5" fill="#a4a39b"/>
<path fill="#8f8e86" stroke="#2a2924" stroke-width="0.400" d="M290.5 130.5Q292.9 127.5 295.3 130.5V156.0H290.5Z"/>
<rect x="291.1" y="131.0" width="1.7" height="24.0" fill="#a4a39b"/>
<path fill="#85847c" stroke="#2a2924" stroke-width="0.500" d="M267 119.400V130.500Q275.700 135 284.500 130.500V119.400Z"/>
<path fill="#9b9a92" d="M268.500 120V131.500Q271 132.500 273.500 132.700V121Z"/>
<ellipse cx="275.700" cy="119.400" rx="8.700" ry="3.600" fill="#96958d" stroke="#2a2924" stroke-width="0.500"/>
<ellipse cx="275.700" cy="119" rx="6" ry="2.300" fill="#a8a79f" stroke="#2a2924" stroke-width="0.400"/>
<path fill="url(#in2)" d="M470.0 158.0L560.0 158.0L596.0 176.0L596.0 188.0L595.5 225.0L592.5 242.5L594.0 262.5L599.0 282.5L604.0 305.0L606.5 325.0L607.5 345.0L609.0 364.0L490.0 368.0L470.0 330.0Z"/>
<path fill="#3c51aa" d="M475.0 222.0L504.0 222.0L504.0 372.0L490.0 378.0L470.0 330.0Z"/>
<path fill="#4359b4" d="M504.0 222.0L510.0 222.0L510.0 372.0L504.0 372.0Z"/>
<path fill="#3b4fa8" opacity="0.6" d="M478.0 158.0L545.0 160.0L600.0 186.0L600.0 200.0L540.0 196.0L537.0 225.0L482.0 225.0Z"/>
<path fill="none" stroke="#101644" stroke-width="0.65" d="M504 222V330M510 222V329"/>
<path fill="#4a60bc" d="M482.0 338.0C485.8 336.5 497.0 330.5 505.0 329.0C513.0 327.5 520.4 327.9 530.0 329.0C539.6 330.1 553.3 332.8 562.5 335.5C571.7 338.2 579.2 342.2 585.0 345.5C590.8 348.8 594.5 352.4 597.5 355.5C600.5 358.6 602.1 362.6 603.0 364.0L616.0 366.0C615.4 368.0 615.2 375.3 612.5 378.0C609.8 380.7 605.4 382.4 600.0 382.0C594.6 381.6 586.7 378.5 580.0 375.5C573.3 372.5 565.0 366.9 560.0 364.0C555.0 361.1 555.0 359.4 550.0 358.0C545.0 356.6 536.7 355.7 530.0 355.5C523.3 355.3 517.1 355.8 510.0 357.0C502.9 358.2 491.2 362.0 487.5 363.0Z"/>
<path fill="none" stroke="#7c8fe0" stroke-width="2.2" opacity="0.6" filter="url(#b1)" d="M512.0 337.0C515.8 336.9 526.7 335.7 535.0 336.5C543.3 337.3 554.0 339.4 562.0 342.0C570.0 344.6 577.7 348.8 583.0 352.0C588.3 355.2 592.2 359.5 594.0 361.0"/>
<path fill="none" stroke="#101644" stroke-width="0.65" d="M482.0 338.0C485.8 336.5 497.0 330.5 505.0 329.0C513.0 327.5 520.4 327.9 530.0 329.0C539.6 330.1 553.3 332.8 562.5 335.5C571.7 338.2 579.2 342.2 585.0 345.5C590.8 348.8 594.5 352.4 597.5 355.5C600.5 358.6 602.1 362.6 603.0 364.0"/>
<path fill="none" stroke="#101644" stroke-width="0.65" d="M490.0 348.0C493.0 346.3 501.3 339.8 508.0 338.0C514.7 336.2 521.3 336.2 530.0 337.0C538.7 337.8 551.3 340.3 560.0 343.0C568.7 345.7 576.3 349.7 582.0 353.0C587.7 356.3 591.3 359.8 594.0 363.0C596.7 366.2 597.3 370.5 598.0 372.0"/>
<path fill="#4c62c0" d="M600 352H616.500L618 374H600Z"/>
<path fill="#4156b4" d="M487.5 363.0C491.2 362.0 502.9 358.2 510.0 357.0C517.1 355.8 523.3 355.3 530.0 355.5C536.7 355.7 545.0 356.6 550.0 358.0C555.0 359.4 555.0 361.1 560.0 364.0C565.0 366.9 573.3 372.5 580.0 375.5C586.7 378.5 594.6 381.6 600.0 382.0C605.4 382.4 609.8 380.7 612.5 378.0C615.2 375.3 615.4 368.0 616.0 366.0L616.0 362.0C616.6 365.1 619.5 375.8 619.5 380.5C619.5 385.2 618.0 388.0 616.0 390.5C614.0 393.0 611.0 395.2 607.5 395.5C604.0 395.8 600.4 393.7 595.0 392.0C589.6 390.3 580.8 388.2 575.0 385.5C569.2 382.8 564.2 378.2 560.0 375.5C555.8 372.8 555.0 370.2 550.0 369.0C545.0 367.8 536.7 367.5 530.0 368.0C523.3 368.5 515.8 370.3 510.0 372.0C504.2 373.7 497.5 377.0 495.0 378.0Z"/>
<path fill="none" stroke="#6e82d8" stroke-width="1.5" opacity="0.6" filter="url(#b1)" d="M490.0 369.0C493.3 367.9 503.3 363.9 510.0 362.5C516.7 361.1 523.5 360.4 530.0 360.5C536.5 360.6 544.3 361.6 549.0 363.0C553.7 364.4 553.2 366.1 558.0 369.0C562.8 371.9 571.0 377.4 578.0 380.5C585.0 383.6 594.2 386.9 600.0 387.5C605.8 388.1 610.8 384.6 613.0 384.0"/>
<path fill="none" stroke="#101644" stroke-width="0.65" d="M487.5 363.0C491.2 362.0 502.9 358.2 510.0 357.0C517.1 355.8 523.3 355.3 530.0 355.5C536.7 355.7 545.0 356.6 550.0 358.0C555.0 359.4 555.0 361.1 560.0 364.0C565.0 366.9 573.3 372.5 580.0 375.5C586.7 378.5 594.6 381.6 600.0 382.0C605.4 382.4 609.8 380.7 612.5 378.0C615.2 375.3 615.4 368.0 616.0 366.0"/>
<path fill="none" stroke="#101644" stroke-width="0.65" d="M495.0 378.0C497.5 377.0 504.2 373.7 510.0 372.0C515.8 370.3 523.3 368.5 530.0 368.0C536.7 367.5 545.0 367.8 550.0 369.0C555.0 370.2 555.8 372.8 560.0 375.5C564.2 378.2 569.2 382.8 575.0 385.5C580.8 388.2 589.6 390.3 595.0 392.0C600.4 393.7 604.0 395.8 607.5 395.5C611.0 395.2 614.0 393.0 616.0 390.5C618.0 388.0 619.5 385.2 619.5 380.5C619.5 375.8 616.6 365.1 616.0 362.0"/>
<path fill="none" stroke="#101644" stroke-width="0.65" d="M492.0 371.0C495.0 369.9 503.7 366.0 510.0 364.5C516.3 363.0 523.5 362.1 530.0 362.0C536.5 361.9 544.5 362.7 549.0 364.0C553.5 365.3 552.3 367.2 557.0 370.0C561.7 372.8 569.8 378.0 577.0 381.0C584.2 384.0 594.0 387.3 600.0 388.0C606.0 388.7 610.8 385.5 613.0 385.0"/>
<path fill="none" stroke="#101644" stroke-width="0.65" d="M510 357V372M513 356.5V371M557 362L556 372M606 382V395.500M612.5 378V393"/>
<path fill="#4c62c0" d="M611.0 186.0C609.8 190.0 605.4 203.5 604.0 210.0C602.6 216.5 603.2 219.6 602.5 225.0C601.8 230.4 600.0 236.2 600.0 242.5C600.0 248.8 601.2 255.8 602.5 262.5C603.8 269.2 605.8 275.4 607.5 282.5C609.2 289.6 611.3 297.9 612.5 305.0C613.7 312.1 614.1 318.3 614.5 325.0C614.9 331.7 614.8 338.8 615.0 345.0C615.2 351.2 615.8 359.2 616.0 362.0L603.0 364.0C602.7 360.8 601.5 351.5 601.0 345.0C600.5 338.5 600.6 331.7 600.0 325.0C599.4 318.3 598.8 312.1 597.5 305.0C596.2 297.9 594.2 289.6 592.5 282.5C590.8 275.4 588.6 269.2 587.5 262.5C586.4 255.8 585.8 248.8 586.0 242.5C586.2 236.2 588.3 232.1 589.0 225.0C589.7 217.9 589.7 206.5 590.0 200.0C590.3 193.5 590.8 188.3 591.0 186.0Z"/>
<path fill="#586ecc" d="M611.0 186.0C609.8 190.0 605.4 203.5 604.0 210.0C602.6 216.5 603.2 219.6 602.5 225.0C601.8 230.4 600.0 236.2 600.0 242.5C600.0 248.8 601.2 255.8 602.5 262.5C603.8 269.2 605.8 275.4 607.5 282.5C609.2 289.6 611.3 297.9 612.5 305.0C613.7 312.1 614.1 318.3 614.5 325.0C614.9 331.7 614.8 338.8 615.0 345.0C615.2 351.2 615.8 359.2 616.0 362.0L609.0 364.0C608.8 360.8 607.9 351.5 607.5 345.0C607.1 338.5 607.1 331.7 606.5 325.0C605.9 318.3 605.2 312.1 604.0 305.0C602.8 297.9 600.7 289.6 599.0 282.5C597.3 275.4 595.1 269.2 594.0 262.5C592.9 255.8 592.2 248.8 592.5 242.5C592.8 236.2 594.8 234.1 595.5 225.0C596.2 215.9 596.8 194.2 597.0 188.0Z"/>
<path fill="none" stroke="#101644" stroke-width="0.65" d="M591.0 186.0C590.8 188.3 590.3 193.5 590.0 200.0C589.7 206.5 589.7 217.9 589.0 225.0C588.3 232.1 586.2 236.2 586.0 242.5C585.8 248.8 586.4 255.8 587.5 262.5C588.6 269.2 590.8 275.4 592.5 282.5C594.2 289.6 596.2 297.9 597.5 305.0C598.8 312.1 599.4 318.3 600.0 325.0C600.6 331.7 600.5 338.5 601.0 345.0C601.5 351.5 602.7 360.8 603.0 364.0"/>
<path fill="none" stroke="#101644" stroke-width="0.65" d="M597.0 188.0C596.8 194.2 596.2 215.9 595.5 225.0C594.8 234.1 592.8 236.2 592.5 242.5C592.2 248.8 592.9 255.8 594.0 262.5C595.1 269.2 597.3 275.4 599.0 282.5C600.7 289.6 602.8 297.9 604.0 305.0C605.2 312.1 605.9 318.3 606.5 325.0C607.1 331.7 607.1 338.5 607.5 345.0C607.9 351.5 608.8 360.8 609.0 364.0"/>
<path fill="none" stroke="#101644" stroke-width="0.65" d="M593.5 188.0C593.2 194.2 592.8 215.9 592.0 225.0C591.2 234.1 589.2 236.2 589.0 242.5C588.8 248.8 589.4 255.8 590.5 262.5C591.6 269.2 593.8 275.4 595.5 282.5C597.2 289.6 599.2 297.9 600.5 305.0C601.8 312.1 602.4 318.3 603.0 325.0C603.6 331.7 603.8 341.7 604.0 345.0"/>
<path fill="none" stroke="#101644" stroke-width="0.75" d="M586 240L601 238.500M593 297L612 296"/>
<path fill="url(#w2)" d="M411.0 180.0C408.0 201.7 411.6 265.3 412.0 300.0C412.4 334.7 412.6 371.7 413.5 388.0C414.4 404.3 413.5 393.8 417.5 398.0C421.5 402.2 430.0 409.0 437.5 413.0C445.0 417.0 452.1 419.4 462.5 422.0C472.9 424.6 489.6 427.2 500.0 428.5C510.4 429.8 519.0 429.9 525.0 429.5C531.0 429.1 533.6 427.9 536.0 426.0C538.4 424.1 539.3 420.0 539.5 418.0C539.7 416.0 538.5 415.8 537.0 414.0C535.5 412.2 532.9 409.4 530.2 407.3C527.5 405.2 524.4 403.3 521.0 401.6C517.6 399.9 513.5 398.2 509.8 397.0C506.1 395.8 501.1 394.8 499.0 394.5C496.9 394.2 497.3 397.4 497.0 395.0C496.7 392.6 497.8 385.5 497.0 380.0C496.2 374.5 494.2 368.0 492.0 362.0C489.8 356.0 486.7 349.8 484.0 344.0C481.3 338.2 478.1 332.2 476.0 327.0C473.9 321.8 472.3 317.5 471.5 313.0C470.7 308.5 470.4 304.7 471.0 300.0C471.6 295.3 473.5 290.0 475.0 285.0C476.5 280.0 478.3 275.5 480.0 270.0C481.7 264.5 483.8 257.4 485.0 252.0C486.2 246.6 487.9 242.2 487.5 237.5C487.1 232.8 474.2 226.6 482.5 224.0C490.8 221.4 530.8 227.7 537.0 222.0C543.2 216.3 537.8 198.7 520.0 190.0C502.2 181.3 448.2 171.7 430.0 170.0C411.8 168.3 414.0 158.3 411.0 180.0Z"/>
<path fill="#4359c2" d="M474.0 224.0C474.2 228.3 475.7 241.5 475.0 250.0C474.3 258.5 471.8 267.5 470.0 275.0C468.2 282.5 465.5 289.6 464.0 295.0C462.5 300.4 461.0 303.3 461.0 307.5C461.0 311.7 462.9 315.8 464.0 320.0C465.1 324.2 464.8 327.1 467.5 333.0C470.2 338.9 476.2 348.4 480.0 355.5C483.8 362.6 487.5 369.2 490.0 375.5C492.5 381.8 494.2 390.1 495.0 393.0L497.0 395.0C497.0 392.5 497.8 385.5 497.0 380.0C496.2 374.5 494.2 368.0 492.0 362.0C489.8 356.0 486.7 349.8 484.0 344.0C481.3 338.2 478.1 332.2 476.0 327.0C473.9 321.8 472.3 317.5 471.5 313.0C470.7 308.5 470.4 304.7 471.0 300.0C471.6 295.3 473.5 290.0 475.0 285.0C476.5 280.0 478.3 275.5 480.0 270.0C481.7 264.5 483.8 257.4 485.0 252.0C486.2 246.6 487.9 242.2 487.5 237.5C487.1 232.8 483.3 226.2 482.5 224.0Z"/>
<path fill="none" stroke="#8092e4" stroke-width="1.4" opacity="0.7" filter="url(#b1)" d="M479.0 232.0C479.2 235.0 480.7 243.3 480.0 250.0C479.3 256.7 476.8 265.0 475.0 272.0C473.2 279.0 470.5 286.0 469.0 292.0C467.5 298.0 466.0 303.0 466.0 308.0C466.0 313.0 467.7 317.5 469.0 322.0C470.3 326.5 471.3 329.3 474.0 335.0C476.7 340.7 481.8 349.2 485.0 356.0C488.2 362.8 491.7 372.7 493.0 376.0"/>
<path fill="none" stroke="#101644" stroke-width="0.75" d="M474.0 224.0C474.2 228.3 475.7 241.5 475.0 250.0C474.3 258.5 471.8 267.5 470.0 275.0C468.2 282.5 465.5 289.6 464.0 295.0C462.5 300.4 461.0 303.3 461.0 307.5C461.0 311.7 462.9 315.8 464.0 320.0C465.1 324.2 464.8 327.1 467.5 333.0C470.2 338.9 476.2 348.4 480.0 355.5C483.8 362.6 487.5 369.2 490.0 375.5C492.5 381.8 494.2 390.1 495.0 393.0"/>
<path fill="none" stroke="#101644" stroke-width="0.75" d="M482.5 224.0C483.3 226.2 487.1 232.8 487.5 237.5C487.9 242.2 486.2 246.6 485.0 252.0C483.8 257.4 481.7 264.5 480.0 270.0C478.3 275.5 476.5 280.0 475.0 285.0C473.5 290.0 471.6 295.3 471.0 300.0C470.4 304.7 470.7 308.5 471.5 313.0C472.3 317.5 473.9 321.8 476.0 327.0C478.1 332.2 481.3 338.2 484.0 344.0C486.7 349.8 489.8 356.0 492.0 362.0C494.2 368.0 496.2 374.5 497.0 380.0C497.8 385.5 497.0 392.5 497.0 395.0"/>
<path fill="none" stroke="#101644" stroke-width="0.65" d="M474 224Q478 221.500 482.500 224M479 348L486.500 346"/>
<path fill="none" stroke="#101644" stroke-width="0.65" d="M478.0 281.0C479.3 282.0 484.1 283.8 486.0 287.0C487.9 290.2 489.3 295.7 489.5 300.0C489.7 304.3 488.6 309.7 487.0 313.0C485.4 316.3 482.3 319.5 480.0 320.0C477.7 320.5 474.2 316.7 473.0 316.0"/>
<path fill="none" stroke="#7a8ce0" stroke-width="1.500" opacity="0.7" d="M480.0 286.0C480.8 287.0 483.9 289.3 485.0 292.0C486.1 294.7 486.7 298.7 486.5 302.0C486.3 305.3 485.2 309.5 484.0 312.0C482.8 314.5 479.8 316.2 479.0 317.0"/>
<path fill="none" stroke="#101644" stroke-width="0.65" d="M477.0 290.0C477.7 290.8 480.2 292.8 481.0 295.0C481.8 297.2 482.2 300.5 482.0 303.0C481.8 305.5 481.0 308.3 480.0 310.0C479.0 311.7 476.7 312.5 476.0 313.0"/>
<path fill="#4a60c4" stroke="#101644" stroke-width="0.65" d="M487.0 409.0C486.2 407.2 487.4 399.7 488.5 398.0C489.6 396.3 493.5 394.3 496.0 394.2C498.5 394.1 506.9 396.1 509.8 397.0C512.7 397.9 518.6 400.4 521.0 401.6C523.4 402.8 528.3 405.9 530.2 407.3C532.1 408.7 536.0 412.8 537.0 414.0C538.0 415.2 539.4 417.8 539.0 418.0C538.6 418.2 535.5 416.0 533.6 415.8C531.7 415.6 525.5 416.5 522.3 416.6C519.1 416.7 509.6 416.8 506.4 416.4C503.2 416.0 497.3 413.9 495.0 413.0C492.7 412.1 487.8 410.8 487.0 409.0Z"/>
<path fill="none" stroke="#101644" stroke-width="0.55" d="M495.600 401.600Q508 403 509.800 408.400Q509 414 505 416.300M522.300 416.600V428M536 416.500V425"/>
<path fill="none" stroke="#8a9cec" stroke-width="1.800" opacity="0.55" filter="url(#b1)" d="M499 404Q505 405.500 506.500 410"/>
<path fill="none" stroke="#101644" stroke-width="0.75" d="M412.0 300.0C412.2 314.7 412.6 371.7 413.5 388.0C414.4 404.3 413.5 393.8 417.5 398.0C421.5 402.2 430.0 409.0 437.5 413.0C445.0 417.0 452.1 419.4 462.5 422.0C472.9 424.6 489.6 427.2 500.0 428.5C510.4 429.8 519.0 429.9 525.0 429.5C531.0 429.1 533.6 427.9 536.0 426.0C538.4 424.1 540.5 421.2 539.5 418.0C538.5 414.8 531.6 408.8 530.0 407.0"/>
<path fill="#4559b8" d="M411.0 183.0C410.7 181.0 410.3 178.4 411.0 175.0C411.7 171.6 412.7 165.7 415.0 162.5C417.3 159.3 414.2 160.8 425.0 156.0C435.8 151.2 467.5 138.2 480.0 134.0C492.5 129.8 490.0 131.2 500.0 131.0C510.0 130.8 527.5 131.0 540.0 132.5C552.5 134.0 565.0 136.7 575.0 140.0C585.0 143.3 593.5 147.9 600.0 152.5C606.5 157.1 611.4 163.1 614.0 167.5C616.6 171.9 615.8 176.2 615.7 179.2C615.6 182.1 615.9 184.1 613.2 185.2C610.5 186.3 605.2 186.0 599.5 186.0C593.8 186.0 586.4 185.9 579.0 185.2C571.6 184.5 561.4 183.2 555.2 181.8C549.0 180.4 544.1 178.0 541.6 176.6C539.1 175.2 541.4 174.9 540.0 173.5C538.6 172.1 536.4 169.5 533.0 168.0C529.6 166.5 524.8 165.1 519.4 164.7C514.0 164.3 505.9 164.6 500.7 165.6C495.5 166.6 490.8 169.3 488.0 170.5C485.2 171.7 483.6 172.0 484.0 173.0C484.4 174.0 486.3 174.9 490.5 176.6C494.7 178.3 503.5 180.8 509.2 183.0C514.9 185.2 520.5 187.4 524.5 189.6C528.5 191.8 531.0 193.8 533.0 196.2C535.0 198.6 535.8 201.4 536.5 204.0C537.2 206.6 537.7 209.3 537.3 211.6C536.9 213.8 535.5 215.9 534.0 217.5C532.5 219.1 530.4 220.3 528.0 221.0C525.6 221.7 523.4 222.1 519.4 221.8C515.4 221.5 512.2 220.7 504.0 219.3C495.8 217.9 479.0 215.3 470.0 213.3C461.0 211.3 457.5 210.1 450.0 207.5C442.5 204.9 431.2 200.9 425.0 197.5C418.8 194.1 415.3 189.4 413.0 187.0C410.7 184.6 411.3 185.0 411.0 183.0Z"/>
<path fill="url(#t2)" d="M419.0 160.0C420.5 157.6 416.8 161.5 427.0 157.5C437.2 153.5 467.8 140.1 480.0 136.0C492.2 131.9 490.0 133.2 500.0 133.0C510.0 132.8 527.7 133.0 540.0 134.5C552.3 136.0 564.3 138.8 574.0 142.0C583.7 145.2 592.2 150.2 598.0 154.0C603.8 157.8 607.3 162.7 609.0 165.0C610.7 167.3 608.7 166.7 608.0 168.1C607.3 169.5 606.7 172.0 604.7 173.2C602.7 174.3 600.3 175.0 596.0 175.0C591.7 175.0 585.2 174.3 579.0 173.2C572.8 172.0 564.3 169.6 558.6 168.1C552.9 166.6 549.0 165.6 545.0 163.9C541.0 162.2 539.3 159.4 534.8 157.9C530.2 156.4 524.0 155.4 517.7 155.0C511.5 154.6 503.0 154.5 497.3 155.3C491.6 156.1 486.6 157.8 483.6 159.6C480.6 161.4 479.7 164.4 479.4 166.4C479.1 168.4 480.1 169.8 482.0 171.5C483.9 173.2 486.0 174.6 490.5 176.6C495.0 178.6 502.8 181.1 509.0 183.5C515.2 185.9 524.3 188.6 528.0 191.0C531.7 193.4 531.3 196.3 531.4 198.0C531.5 199.7 530.8 200.3 528.8 201.4C526.8 202.5 524.9 204.0 519.4 204.4C513.9 204.8 503.8 204.7 495.6 204.0C487.4 203.3 477.6 201.5 470.0 200.0C462.4 198.5 457.5 197.8 450.0 195.0C442.5 192.2 430.3 186.8 425.0 183.0C419.7 179.2 419.0 175.8 418.0 172.0C417.0 168.2 417.5 162.4 419.0 160.0Z"/>
<path fill="none" stroke="#8e9ff0" stroke-width="1.6" opacity="0.8" filter="url(#b1)" d="M486.0 163.0C488.0 162.2 492.7 158.9 498.0 158.0C503.3 157.1 511.9 157.1 517.7 157.5C523.5 157.9 529.0 159.0 533.0 160.5C537.0 162.0 540.5 165.5 542.0 166.5"/>
<path fill="none" stroke="#101644" stroke-width="0.5" d="M486.2 168.0C488.3 166.9 493.8 162.6 499.0 161.3C504.2 160.0 512.0 159.7 517.7 160.0C523.4 160.3 529.2 161.4 533.0 163.0C536.8 164.6 539.2 167.8 540.7 169.8C542.2 171.8 541.8 174.1 542.0 175.0"/>
<path fill="none" stroke="#8e9ff0" stroke-width="2" opacity="0.75" filter="url(#b1)" d="M416.0 180.0C418.0 182.0 422.3 188.4 428.0 192.0C433.7 195.6 440.1 198.2 450.0 201.5C459.9 204.8 476.2 209.1 487.5 211.5C498.8 213.9 511.1 215.5 518.0 216.0C524.9 216.5 526.3 215.7 529.0 214.5C531.7 213.3 533.2 209.9 534.0 209.0"/>
<path fill="none" stroke="#8e9ff0" stroke-width="1.8" opacity="0.8" filter="url(#b1)" d="M547.0 171.0C549.2 171.8 554.7 174.1 560.0 175.5C565.3 176.9 572.7 178.6 579.0 179.5C585.3 180.4 592.8 181.0 598.0 181.0C603.2 181.0 608.0 179.8 610.0 179.5"/>
<path fill="none" stroke="#101644" stroke-width="0.75" d="M411.0 183.0C410.7 181.0 410.3 178.4 411.0 175.0C411.7 171.6 412.7 165.7 415.0 162.5C417.3 159.3 414.2 160.8 425.0 156.0C435.8 151.2 467.5 138.2 480.0 134.0C492.5 129.8 490.0 131.2 500.0 131.0C510.0 130.8 527.5 131.0 540.0 132.5C552.5 134.0 565.0 136.7 575.0 140.0C585.0 143.3 593.5 147.9 600.0 152.5C606.5 157.1 611.4 163.1 614.0 167.5C616.6 171.9 615.8 176.2 615.7 179.2C615.6 182.1 615.9 184.1 613.2 185.2C610.5 186.3 605.2 186.0 599.5 186.0C593.8 186.0 586.4 185.9 579.0 185.2C571.6 184.5 561.4 183.2 555.2 181.8C549.0 180.4 544.1 178.0 541.6 176.6C539.1 175.2 541.4 174.9 540.0 173.5C538.6 172.1 536.4 169.5 533.0 168.0C529.6 166.5 524.8 165.1 519.4 164.7C514.0 164.3 505.9 164.6 500.7 165.6C495.5 166.6 490.8 169.3 488.0 170.5C485.2 171.7 483.6 172.0 484.0 173.0C484.4 174.0 486.3 174.9 490.5 176.6C494.7 178.3 503.5 180.8 509.2 183.0C514.9 185.2 520.5 187.4 524.5 189.6C528.5 191.8 531.0 193.8 533.0 196.2C535.0 198.6 535.8 201.4 536.5 204.0C537.2 206.6 537.7 209.3 537.3 211.6C536.9 213.8 535.5 215.9 534.0 217.5C532.5 219.1 530.4 220.3 528.0 221.0C525.6 221.7 523.4 222.1 519.4 221.8C515.4 221.5 512.2 220.7 504.0 219.3C495.8 217.9 479.0 215.3 470.0 213.3C461.0 211.3 457.5 210.1 450.0 207.5C442.5 204.9 431.2 200.9 425.0 197.5C418.8 194.1 415.3 189.4 413.0 187.0C410.7 184.6 411.3 185.0 411.0 183.0Z"/>
<path fill="none" stroke="#101644" stroke-width="0.65" d="M419.0 160.0C420.5 157.6 416.8 161.5 427.0 157.5C437.2 153.5 467.8 140.1 480.0 136.0C492.2 131.9 490.0 133.2 500.0 133.0C510.0 132.8 527.7 133.0 540.0 134.5C552.3 136.0 564.3 138.8 574.0 142.0C583.7 145.2 592.2 150.2 598.0 154.0C603.8 157.8 607.3 162.7 609.0 165.0C610.7 167.3 608.7 166.7 608.0 168.1C607.3 169.5 606.7 172.0 604.7 173.2C602.7 174.3 600.3 175.0 596.0 175.0C591.7 175.0 585.2 174.3 579.0 173.2C572.8 172.0 564.3 169.6 558.6 168.1C552.9 166.6 549.0 165.6 545.0 163.9C541.0 162.2 539.3 159.4 534.8 157.9C530.2 156.4 524.0 155.4 517.7 155.0C511.5 154.6 503.0 154.5 497.3 155.3C491.6 156.1 486.6 157.8 483.6 159.6C480.6 161.4 479.7 164.4 479.4 166.4C479.1 168.4 480.1 169.8 482.0 171.5C483.9 173.2 486.0 174.6 490.5 176.6C495.0 178.6 502.8 181.1 509.0 183.5C515.2 185.9 524.3 188.6 528.0 191.0C531.7 193.4 531.3 196.3 531.4 198.0C531.5 199.7 530.8 200.3 528.8 201.4C526.8 202.5 524.9 204.0 519.4 204.4C513.9 204.8 503.8 204.7 495.6 204.0C487.4 203.3 477.6 201.5 470.0 200.0C462.4 198.5 457.5 197.8 450.0 195.0C442.5 192.2 430.3 186.8 425.0 183.0C419.7 179.2 419.0 175.8 418.0 172.0C417.0 168.2 417.5 162.4 419.0 160.0Z"/>
<path fill="none" stroke="#101644" stroke-width="0.65" d="M519.400 204.400V221.800M604.700 173.200Q607 180 604 186M545 163.900Q541 170 541.600 176.600M419 160L414 164"/>
<path fill="url(#w3)" d="M655.0 190.0C655.3 192.0 656.2 201.0 657.0 205.0C657.8 209.0 660.1 215.3 661.0 220.0C661.9 224.7 663.5 234.3 664.0 240.0C664.5 245.7 664.2 256.5 665.0 262.5C665.8 268.5 669.0 280.0 670.0 285.0C671.0 290.0 672.5 296.0 672.5 300.0C672.5 304.0 671.0 311.3 670.0 315.0C669.0 318.7 666.5 323.6 665.0 328.0C663.5 332.4 660.4 343.3 659.0 348.0C657.6 352.7 655.0 359.3 654.5 363.0C654.0 366.7 653.6 371.5 655.0 375.5C656.4 379.5 660.3 388.0 665.0 393.0C669.7 398.0 683.3 409.1 690.0 413.0C696.7 416.9 706.7 420.1 715.0 422.0C723.3 423.9 744.4 426.8 752.5 427.5C760.6 428.2 772.9 427.5 776.0 427.5L776 236L740 200L690 180Z"/>
<path fill="#3d50a6" d="M776.0 236.0L787.5 232.0L787.5 422.0L776.0 427.5Z"/>
<path fill="#3f53a4" d="M787.5 232.0L845.0 200.0L845.0 390.0L815.0 405.5L787.5 422.0Z"/>
<path fill="#3a4c9c" d="M845.0 200.0L852.5 198.0L852.5 383.0L845.0 390.5Z"/>
<path fill="none" stroke="#b8b8b8" stroke-width="1.2" d="M853.500 200V380"/>
<path fill="none" stroke="#101644" stroke-width="0.65" d="M776 238V427.500M787.500 236V422M845 206V390M776 427.500L787.500 422L815 405.500L845 390L852.500 383"/>
<path fill="none" stroke="#101644" stroke-width="0.65" d="M655.0 190.0C655.3 192.0 656.2 201.0 657.0 205.0C657.8 209.0 660.1 215.3 661.0 220.0C661.9 224.7 663.5 234.3 664.0 240.0C664.5 245.7 664.2 256.5 665.0 262.5C665.8 268.5 669.0 280.0 670.0 285.0C671.0 290.0 672.5 296.0 672.5 300.0C672.5 304.0 671.0 311.3 670.0 315.0C669.0 318.7 666.5 323.6 665.0 328.0C663.5 332.4 660.4 343.3 659.0 348.0C657.6 352.7 655.0 359.3 654.5 363.0C654.0 366.7 653.6 371.5 655.0 375.5C656.4 379.5 660.3 388.0 665.0 393.0C669.7 398.0 683.3 409.1 690.0 413.0C696.7 416.9 706.7 420.1 715.0 422.0C723.3 423.9 744.4 426.8 752.5 427.5C760.6 428.2 772.9 427.5 776.0 427.5"/>
<path fill="#4359b0" stroke="#101644" stroke-width="0.4" d="M656.0 352.0C656.5 349.3 657.6 347.0 658.0 350.0C658.4 353.0 658.7 366.2 658.5 370.0C658.3 373.8 657.6 373.7 657.0 373.0C656.4 372.3 655.2 369.5 655.0 366.0C654.8 362.5 655.5 354.7 656.0 352.0Z"/>
<ellipse cx="815.0" cy="298.5" rx="7.800" ry="11.200" transform="rotate(24 815.0 298.5)" fill="#2b3b8c" stroke="#101644" stroke-width="0.65"/>
<path d="M810.0 303.5Q815.0 304.5 822.0 293.5Q821.0 303.5 814.0 308.5Q810.5 308.0 810.0 303.5Z" fill="#4258b2"/>
<ellipse cx="815.7" cy="356.5" rx="7.800" ry="11.200" transform="rotate(24 815.7 356.5)" fill="#2b3b8c" stroke="#101644" stroke-width="0.65"/>
<path d="M810.7 361.5Q815.7 362.5 822.7 351.5Q821.7 361.5 814.7 366.5Q811.2 366.0 810.7 361.5Z" fill="#4258b2"/>
<path fill="#4d62be" stroke="#101644" stroke-width="0.65" d="M780.0 274.0C780.3 272.0 778.6 267.9 783.8 263.8C789.0 259.8 826.1 237.2 831.7 233.5C837.3 229.8 838.6 227.8 840.0 227.3C841.4 226.8 845.2 227.6 846.0 228.3C846.8 229.0 848.2 232.9 848.3 234.6C848.4 236.3 847.9 243.1 847.3 245.0C846.7 246.9 843.1 252.1 842.0 253.3C840.9 254.6 840.8 254.3 835.8 257.5C830.8 260.7 797.1 282.6 792.0 285.6C786.9 288.6 785.9 287.9 784.8 287.7C783.7 287.5 781.1 284.9 780.6 283.5C780.1 282.1 779.7 276.0 780.0 274.0Z"/>
<path fill="#2a3a8a" stroke="#101644" stroke-width="0.65" d="M784.8 273.0C784.9 271.9 782.5 271.5 787.0 268.0C791.5 264.5 825.0 240.5 829.6 237.7C834.2 234.9 832.6 238.7 833.0 240.0C833.4 241.3 838.3 247.0 834.0 251.0C829.7 255.0 794.9 277.2 790.0 280.0C785.1 282.8 786.0 279.7 785.5 279.0C785.0 278.3 784.6 274.1 784.8 273.0Z"/>
<path fill="#3b50a8" d="M786.0 276.5C790.8 273.1 828.7 248.1 833.5 245.5C838.3 242.9 838.4 247.6 834.0 251.0C829.6 254.4 794.9 277.2 790.0 280.0C785.1 282.8 785.9 279.4 785.5 279.0C785.1 278.6 781.2 279.9 786.0 276.5Z"/>
<path fill="#5a70cc" d="M836.0 233.0C837.1 231.0 841.5 229.1 843.0 229.0C844.5 228.9 846.5 230.1 847.0 232.0C847.5 233.9 847.7 240.6 847.0 243.0C846.3 245.4 843.5 248.5 842.0 250.0C840.5 251.5 836.9 254.8 836.0 254.0C835.1 253.2 835.0 246.8 835.0 244.0C835.0 241.2 834.9 235.0 836.0 233.0Z"/>
<path fill="none" stroke="#101644" stroke-width="0.4" d="M787 268L783.800 263.800M829.600 237.700L836 230M834 251L840 255M790 280L788 286.500M786 276.500L833.500 245.500"/>
<path fill="#4156b2" d="M655.0 190.0C654.3 187.9 654.5 184.4 655.0 182.5C655.5 180.6 657.8 177.1 659.0 176.0C660.2 174.9 661.5 174.3 664.0 174.0C666.5 173.7 672.4 173.3 677.5 174.0C682.6 174.7 696.3 177.2 702.5 179.0C708.7 180.8 720.0 185.4 724.0 187.5C728.0 189.6 729.7 193.3 732.5 195.0C735.3 196.7 740.7 199.3 745.0 200.0C749.3 200.7 760.3 201.2 765.0 200.5C769.7 199.8 777.3 196.9 780.0 195.0C782.7 193.1 785.0 187.5 785.5 186.0C786.0 184.5 785.2 184.3 783.5 183.5C781.8 182.7 776.3 180.6 773.0 179.9C769.7 179.2 762.0 179.0 758.4 177.9C754.8 176.8 749.1 174.2 746.0 171.7C742.9 169.2 737.0 163.0 735.0 159.4C733.0 155.8 731.3 147.6 730.8 144.6C730.3 141.6 730.9 138.5 731.5 137.0C732.1 135.5 733.4 133.9 735.5 133.0C737.6 132.1 741.9 130.3 747.5 130.0C753.1 129.7 770.2 130.0 777.5 131.0C784.8 132.0 795.8 135.0 802.5 137.5C809.2 140.0 821.8 146.0 827.5 150.0C833.2 154.0 841.9 162.8 845.0 167.5C848.1 172.2 850.0 180.7 851.0 185.0C852.0 189.3 852.6 197.2 852.5 200.0C852.4 202.8 851.3 204.8 850.0 206.0C848.7 207.2 851.3 204.6 843.0 209.0C834.7 213.4 795.9 234.6 787.5 239.0C779.1 243.4 783.0 241.5 780.0 242.0C777.0 242.5 770.3 242.8 765.0 242.5C759.7 242.2 747.3 241.3 740.0 240.0C732.7 238.7 717.3 235.4 710.0 233.0C702.7 230.6 690.6 225.3 685.0 222.0C679.4 218.7 671.3 211.2 668.0 208.0C664.7 204.8 661.7 200.4 660.0 198.0C658.3 195.6 655.7 192.1 655.0 190.0Z"/>
<path fill="url(#t3)" d="M660.0 185.0C659.6 183.1 660.3 180.1 661.0 179.0C661.7 177.9 662.8 176.8 665.0 176.5C667.2 176.2 672.5 175.8 677.5 176.5C682.5 177.2 696.6 179.8 702.5 181.5C708.4 183.2 718.2 187.4 722.0 189.5C725.8 191.6 727.9 195.8 731.0 197.5C734.1 199.2 740.5 201.8 745.0 202.5C749.5 203.2 760.2 203.7 765.0 203.0C769.8 202.3 778.0 199.6 781.0 197.5C784.0 195.4 787.0 189.9 787.5 187.0C788.0 184.1 786.9 178.5 785.0 176.0C783.1 173.5 777.4 169.8 773.5 168.5C769.6 167.2 760.2 167.1 756.0 166.0C751.8 164.9 744.7 161.8 742.0 160.0C739.3 158.2 736.6 154.8 735.5 152.5C734.4 150.2 733.7 145.1 734.0 143.0C734.3 140.9 735.6 137.9 737.5 136.5C739.4 135.1 742.7 132.9 748.0 132.5C753.3 132.1 770.3 132.5 777.5 133.5C784.7 134.5 795.5 137.5 802.0 140.0C808.5 142.5 820.6 148.6 826.0 152.5C831.4 156.4 839.6 164.5 842.5 169.0C845.4 173.5 847.0 182.3 847.5 186.0C848.0 189.7 847.3 194.9 846.0 197.0C844.7 199.1 845.9 197.5 838.0 202.0C830.1 206.5 794.9 226.3 787.0 230.5C779.1 234.7 781.9 233.0 779.0 233.5C776.1 234.0 770.2 234.3 765.0 234.0C759.8 233.7 747.1 232.7 740.0 231.5C732.9 230.3 718.9 227.3 712.0 225.0C705.1 222.7 693.3 217.5 688.0 214.5C682.7 211.5 675.2 205.4 672.0 202.5C668.8 199.6 665.6 195.3 664.0 193.0C662.4 190.7 660.4 186.9 660.0 185.0Z"/>
<path fill="none" stroke="#8698ea" stroke-width="1.6" opacity="0.7" filter="url(#b1)" d="M662.0 198.0C663.7 199.8 667.3 205.2 672.0 209.0C676.7 212.8 683.2 217.0 690.0 220.5C696.8 224.0 704.7 227.3 713.0 230.0C721.3 232.7 731.3 235.0 740.0 236.5C748.7 238.0 758.7 238.7 765.0 239.0C771.3 239.3 775.8 238.6 778.0 238.5"/>
<path fill="none" stroke="#8698ea" stroke-width="1.2" opacity="0.5" filter="url(#b1)" d="M733.0 148.0C733.8 150.0 735.2 156.4 738.0 160.0C740.8 163.6 746.3 167.2 750.0 169.5C753.7 171.8 756.0 172.9 760.0 174.0C764.0 175.1 771.7 175.7 774.0 176.0"/>
<path fill="none" stroke="#101644" stroke-width="0.75" d="M655.0 190.0C654.3 187.9 654.5 184.4 655.0 182.5C655.5 180.6 657.8 177.1 659.0 176.0C660.2 174.9 661.5 174.3 664.0 174.0C666.5 173.7 672.4 173.3 677.5 174.0C682.6 174.7 696.3 177.2 702.5 179.0C708.7 180.8 720.0 185.4 724.0 187.5C728.0 189.6 729.7 193.3 732.5 195.0C735.3 196.7 740.7 199.3 745.0 200.0C749.3 200.7 760.3 201.2 765.0 200.5C769.7 199.8 777.3 196.9 780.0 195.0C782.7 193.1 785.0 187.5 785.5 186.0C786.0 184.5 785.2 184.3 783.5 183.5C781.8 182.7 776.3 180.6 773.0 179.9C769.7 179.2 762.0 179.0 758.4 177.9C754.8 176.8 749.1 174.2 746.0 171.7C742.9 169.2 737.0 163.0 735.0 159.4C733.0 155.8 731.3 147.6 730.8 144.6C730.3 141.6 730.9 138.5 731.5 137.0C732.1 135.5 733.4 133.9 735.5 133.0C737.6 132.1 741.9 130.3 747.5 130.0C753.1 129.7 770.2 130.0 777.5 131.0C784.8 132.0 795.8 135.0 802.5 137.5C809.2 140.0 821.8 146.0 827.5 150.0C833.2 154.0 841.9 162.8 845.0 167.5C848.1 172.2 850.0 180.7 851.0 185.0C852.0 189.3 852.6 197.2 852.5 200.0C852.4 202.8 851.3 204.8 850.0 206.0C848.7 207.2 851.3 204.6 843.0 209.0C834.7 213.4 795.9 234.6 787.5 239.0C779.1 243.4 783.0 241.5 780.0 242.0C777.0 242.5 770.3 242.8 765.0 242.5C759.7 242.2 747.3 241.3 740.0 240.0C732.7 238.7 717.3 235.4 710.0 233.0C702.7 230.6 690.6 225.3 685.0 222.0C679.4 218.7 671.3 211.2 668.0 208.0C664.7 204.8 661.7 200.4 660.0 198.0C658.3 195.6 655.7 192.1 655.0 190.0Z"/>
<path fill="none" stroke="#101644" stroke-width="0.65" d="M660.0 185.0C659.6 183.1 660.3 180.1 661.0 179.0C661.7 177.9 662.8 176.8 665.0 176.5C667.2 176.2 672.5 175.8 677.5 176.5C682.5 177.2 696.6 179.8 702.5 181.5C708.4 183.2 718.2 187.4 722.0 189.5C725.8 191.6 727.9 195.8 731.0 197.5C734.1 199.2 740.5 201.8 745.0 202.5C749.5 203.2 760.2 203.7 765.0 203.0C769.8 202.3 778.0 199.6 781.0 197.5C784.0 195.4 787.0 189.9 787.5 187.0C788.0 184.1 786.9 178.5 785.0 176.0C783.1 173.5 777.4 169.8 773.5 168.5C769.6 167.2 760.2 167.1 756.0 166.0C751.8 164.9 744.7 161.8 742.0 160.0C739.3 158.2 736.6 154.8 735.5 152.5C734.4 150.2 733.7 145.1 734.0 143.0C734.3 140.9 735.6 137.9 737.5 136.5C739.4 135.1 742.7 132.9 748.0 132.5C753.3 132.1 770.3 132.5 777.5 133.5C784.7 134.5 795.5 137.5 802.0 140.0C808.5 142.5 820.6 148.6 826.0 152.5C831.4 156.4 839.6 164.5 842.5 169.0C845.4 173.5 847.0 182.3 847.5 186.0C848.0 189.7 847.3 194.9 846.0 197.0C844.7 199.1 845.9 197.5 838.0 202.0C830.1 206.5 794.9 226.3 787.0 230.5C779.1 234.7 781.9 233.0 779.0 233.5C776.1 234.0 770.2 234.3 765.0 234.0C759.8 233.7 747.1 232.7 740.0 231.5C732.9 230.3 718.9 227.3 712.0 225.0C705.1 222.7 693.3 217.5 688.0 214.5C682.7 211.5 675.2 205.4 672.0 202.5C668.8 199.6 665.6 195.3 664.0 193.0C662.4 190.7 660.4 186.9 660.0 185.0Z"/>
<path fill="none" stroke="#101644" stroke-width="0.65" d="M776 233.500V242.500M787.500 230.500V239M838 202L843 209M846 197L852 200M756 165.600Q755 172 758.400 177.900M760 166.300Q759.500 172 762.500 178.300M724 187.500L722 189.500"/>
</svg>
</body></html>
